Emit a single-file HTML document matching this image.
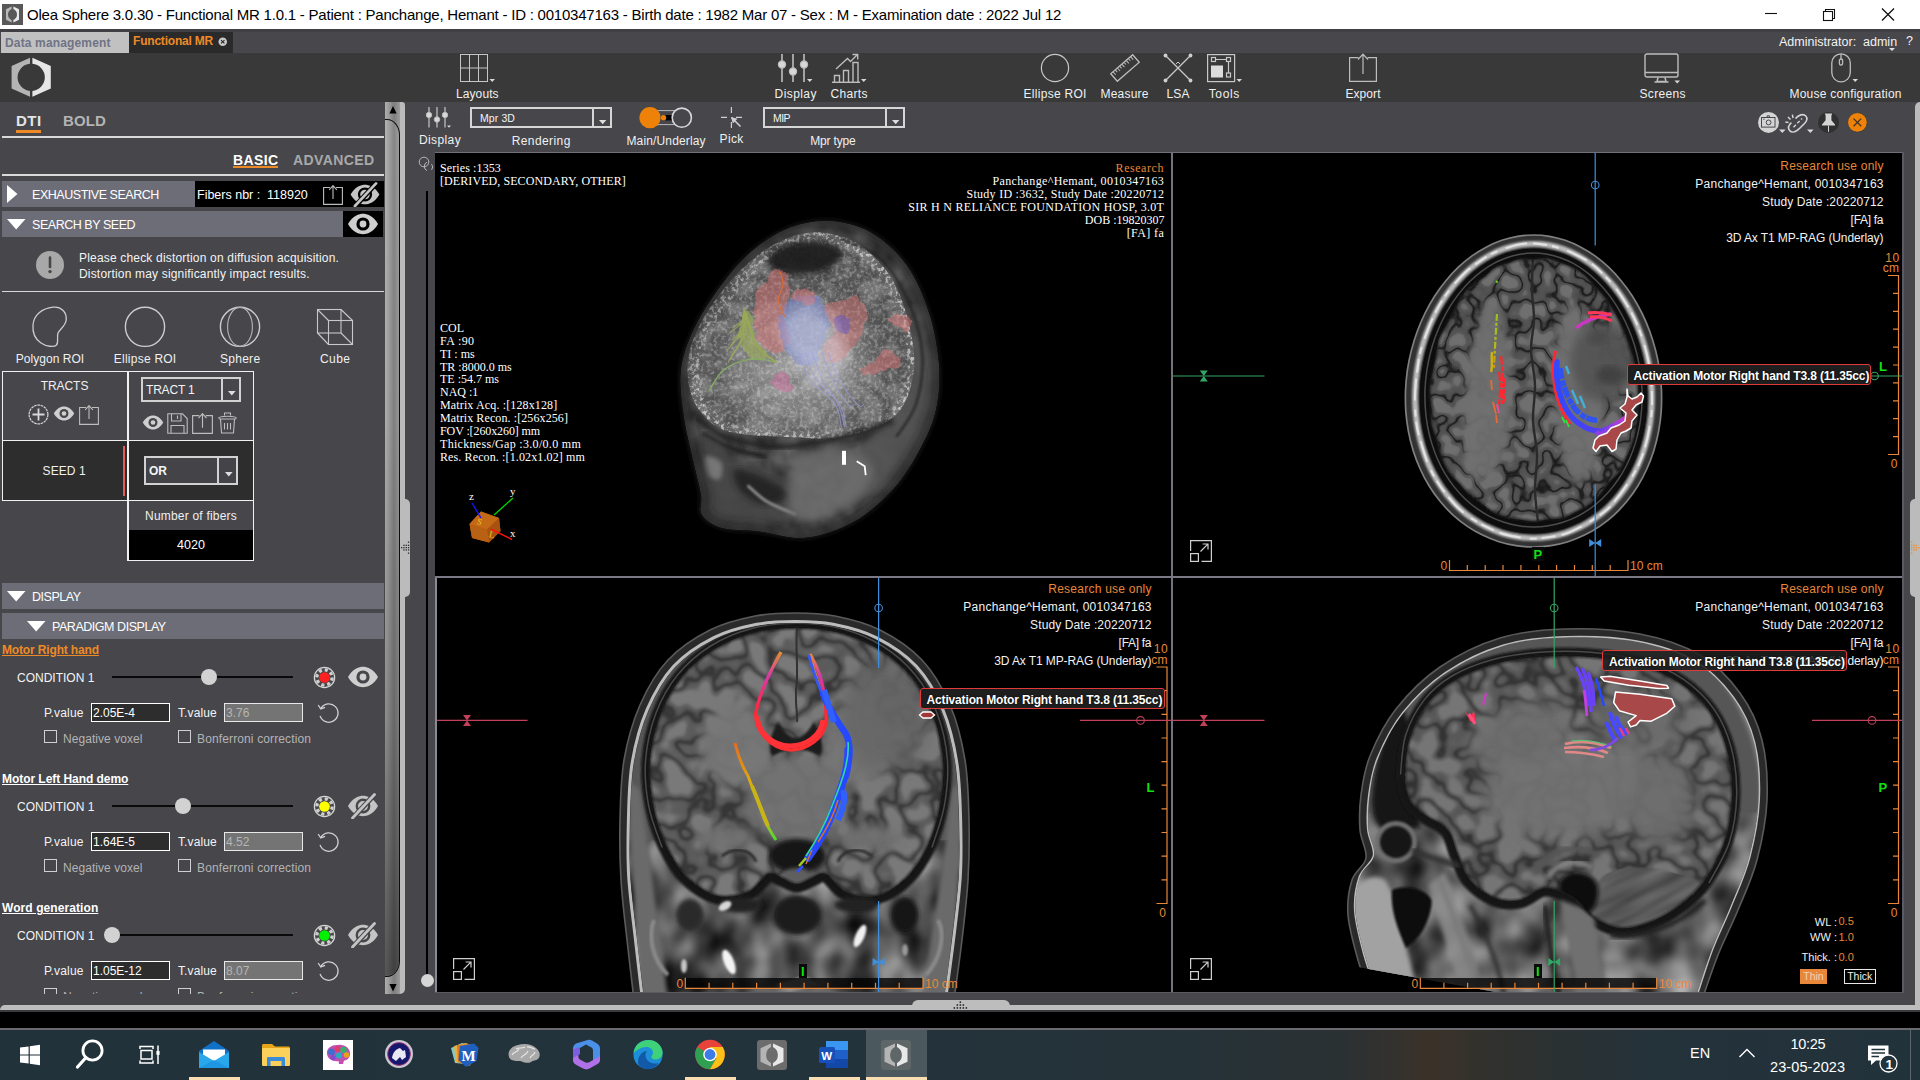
<!DOCTYPE html>
<html><head><meta charset="utf-8"><title>Olea Sphere</title>
<style>
*{box-sizing:border-box;margin:0;padding:0}
html,body{width:1920px;height:1080px;overflow:hidden;background:#46464b;-webkit-font-smoothing:antialiased;font-family:"Liberation Sans",sans-serif;color:#fff}
.a{position:absolute}
.t{position:absolute;white-space:nowrap;line-height:1}
svg{position:absolute;overflow:visible}
.lbl{position:absolute;white-space:nowrap;line-height:1;font-size:12px;color:#f0f0f0;transform:translateX(-50%)}
.bar{position:absolute;background:#6d6d77;left:2px;height:26px}
.bar span{position:absolute;top:7.5px;font-size:12.5px;line-height:1;color:#fff;white-space:nowrap;letter-spacing:-0.46px}
.inp{position:absolute;width:79px;height:19px;border:1px solid #fff;background:#2d2d2d;font-size:12px;line-height:18.5px;padding-left:1px;color:#fff}
.inp.g{background:#747474;border-color:#e8e8e8;color:#b4b4b4}
.cb{position:absolute;width:13px;height:13px;border:1px solid #d0d0d0}
.gl{position:absolute;font-size:12px;line-height:1;color:#b4b4b4;white-space:nowrap;letter-spacing:0.05px}
.wl{position:absolute;font-size:13px;line-height:1;color:#f4f4f4;white-space:nowrap}
.ser{font-family:"Liberation Serif",serif;font-size:12px;line-height:13px;color:#fff;position:absolute;white-space:nowrap}
.vt{position:absolute;font-size:12px;line-height:1;color:#f2f2f2;white-space:nowrap;text-align:right}
.or{color:#e8873a}
</style></head><body>
<!-- title bar -->
<div class="a" style="left:0;top:0;width:1920px;height:29px;background:#fff"></div>
<svg style="left:2px;top:4px" width="21" height="21" viewBox="0 0 21 21"><rect width="21" height="21" fill="#585858"/><path d="M9.6 2.6 L4 5.2 V15.8 L9.6 18.4 V16 A6 6 0 0 1 9.6 5 Z" fill="#b8b8b8"/><path d="M11.4 2.6 L17 5.2 V15.8 L11.4 18.4 V16 A6 6 0 0 0 11.4 5 Z" fill="#e8e8e8"/></svg>
<div class="t" id="ttl" style="left:27px;top:6.5px;font-size:15px;color:#000;letter-spacing:-0.22px">Olea Sphere 3.0.30 - Functional MR 1.0.1 - Patient : Panchange, Hemant - ID : 0010347163 - Birth date : 1982 Mar 07 - Sex : M - Examination date : 2022 Jul 12</div>
<svg style="left:1760px;top:4px" width="150" height="22" viewBox="0 0 150 22" fill="none" stroke="#111" stroke-width="1.1"><path d="M5 9.5H17"/><rect x="63.5" y="7.5" width="9" height="9"/><path d="M65.5 7.5V5.5H74.5V14.5H72.5"/><path d="M122 4.5L134 16.5M134 4.5L122 16.5" stroke-width="1.3"/></svg>
<!-- tab bar -->
<div class="a" style="left:0;top:29px;width:1920px;height:24px;background:#47474c"></div>
<div class="a" style="left:0;top:29px;width:1920px;height:3px;background:#3f3f44"></div>
<div class="a" style="left:1px;top:32px;width:128px;height:21px;background:#c1c1c1"></div>
<div class="t" style="left:5px;top:36.5px;font-size:12px;font-weight:bold;color:#6f7384;letter-spacing:0.15px">Data management</div>
<div class="a" style="left:129px;top:32px;width:104px;height:21px;background:#2a2a2a"></div>
<div class="t" style="left:133px;top:35px;font-size:12px;font-weight:bold;color:#ee8a26;letter-spacing:-0.2px">Functional MR</div>
<svg style="left:217.5px;top:36.8px" width="9.5" height="9.5" viewBox="0 0 10 10"><circle cx="5" cy="5" r="4.5" fill="#c8c8c8"/><path d="M3.2 3.2L6.8 6.8M6.8 3.2L3.2 6.8" stroke="#2a2a2a" stroke-width="1.2"/></svg>
<div class="t" style="left:1779px;top:35.5px;font-size:12.5px;color:#f2f2f2;letter-spacing:0px">Administrator:&nbsp; admin</div>
<svg style="left:1889px;top:48px" width="6" height="4"><path d="M0 0H6L3 3Z" fill="#ddd"/></svg>
<div class="t" style="left:1906px;top:35px;font-size:12.5px;color:#f2f2f2">?</div>
<!-- main toolbar -->
<div class="a" style="left:0;top:53px;width:1920px;height:49px;background:#393939"></div>
<svg style="left:11px;top:57px" width="41" height="41" viewBox="0 0 41 41"><path d="M19 0.8 L0.6 9 V31.5 L19 39.8 V33.9 A13.6 13.6 0 0 1 19 6.8 Z" fill="#b4b4b4"/><path d="M21.4 0.8 L39.8 9 V31.5 L21.4 39.8 V33.9 A13.6 13.6 0 0 0 21.4 6.8 Z" fill="#e6e6e6"/></svg>
<!-- layouts -->
<svg style="left:460px;top:54px" width="40" height="30" viewBox="0 0 40 30" fill="none" stroke="#c6c6c6" stroke-width="1"><rect x="0.5" y="0.5" width="27" height="27"/><path d="M9.5 0.5V27.5M18.5 0.5V27.5M0.5 14H27.5"/><path d="M29.5 25H35L32.2 28Z" fill="#d8d8d8" stroke="none"/></svg>
<div class="lbl" style="left:477.35px;top:88px;letter-spacing:0.1px">Layouts</div>
<!-- display -->
<svg style="left:776px;top:54px" width="40" height="30" viewBox="0 0 40 30" fill="none" stroke="#bdbdbd" stroke-width="1.6"><path d="M6 0V28M17 0V28M28 0V28"/><g fill="#d8d8d8" stroke="#bdbdbd" stroke-width="1.2"><circle cx="6" cy="10.5" r="3.6"/><circle cx="17" cy="17.5" r="3.6"/><circle cx="28" cy="10.5" r="3.6"/></g><path d="M31 25H36.5L33.7 28Z" fill="#d8d8d8" stroke="none"/></svg>
<div class="lbl" style="left:795.705px;top:88px;letter-spacing:0.41px">Display</div>
<!-- charts -->
<svg style="left:831px;top:53px" width="40" height="31" viewBox="0 0 40 31" fill="none" stroke="#bdbdbd" stroke-width="1.4"><path d="M1 29.3H29"/><path d="M3.5 29V22.5H8.5V29M12.5 29V17.5H17.5V29M22 29V9.5H27V29"/><path d="M5 16L16.5 5.5L19.5 8.5L26.5 1.5M21.5 1.5H26.7V6.5"/><path d="M30 26H35.5L32.7 29Z" fill="#d8d8d8" stroke="none"/></svg>
<div class="lbl" style="left:849.15px;top:88px;letter-spacing:0.3px">Charts</div>
<!-- ellipse roi -->
<svg style="left:1040px;top:53px" width="30" height="30" viewBox="0 0 30 30" fill="none" stroke="#c8c8c8" stroke-width="1.2"><circle cx="15" cy="15" r="13.6"/></svg>
<div class="lbl" style="left:1055.145px;top:88px;letter-spacing:0.29px">Ellipse ROI</div>
<!-- measure -->
<svg style="left:1110px;top:53px" width="30" height="30" viewBox="0 0 30 30" fill="none" stroke="#bdbdbd" stroke-width="1.3"><g transform="rotate(-41 15 15)"><rect x="0.5" y="10" width="29" height="10"/><path d="M3.5 10V14M6.4 10V13M9.300 10V14M12.200 10V13M15.100 10V14M18 10V13M20.900 10V14M23.800 10V13M26.700 10V14" stroke-width="1"/></g></svg>
<div class="lbl" style="left:1124.605px;top:88px;letter-spacing:0.21px">Measure</div>
<!-- LSA -->
<svg style="left:1163px;top:53px" width="30" height="30" viewBox="0 0 30 30" fill="none" stroke="#c8c8c8" stroke-width="1.3"><path d="M2.5 2.5L27.5 27.5M27.5 2.5L2.5 27.5"/><g fill="#d0d0d0" stroke="none"><circle cx="2.5" cy="2.5" r="1.9"/><circle cx="27.5" cy="2.5" r="1.9"/><circle cx="2.5" cy="27.5" r="1.9"/><circle cx="27.5" cy="27.5" r="1.9"/></g><path d="M13 11L15 9L17 11" stroke-width="1"/></svg>
<div class="lbl" style="left:1178.085px;top:88px;letter-spacing:0.17px">LSA</div>
<!-- tools -->
<svg style="left:1207px;top:54px" width="36" height="30" viewBox="0 0 36 30" fill="none" stroke="#c8c8c8" stroke-width="1.2"><rect x="0.6" y="0.6" width="27" height="27"/><rect x="4" y="11.5" width="12" height="12" fill="#dcdcdc" stroke="none"/><rect x="4.5" y="3.5" width="4" height="4"/><rect x="19.5" y="3.5" width="4" height="4"/><rect x="19.5" y="19" width="4" height="4"/><path d="M8.5 5.5H19.5M21.5 7.5V19"/><path d="M29.5 25H35L32.2 28Z" fill="#d8d8d8" stroke="none"/></svg>
<div class="lbl" style="left:1224.31px;top:88px;letter-spacing:0.62px">Tools</div>
<!-- export -->
<svg style="left:1348px;top:53px" width="30" height="30" viewBox="0 0 30 30" fill="none" stroke="#bdbdbd" stroke-width="1.2"><path d="M10.5 4.6H1.6V28.4H28.4V4.6H19.5"/><path d="M15 21V1.5M10 6.5L15 1.2L20 6.5"/></svg>
<div class="lbl" style="left:1363.04px;top:88px;letter-spacing:0.08px">Export</div>
<!-- screens -->
<svg style="left:1644px;top:53px" width="40" height="31" viewBox="0 0 40 31" fill="none" stroke="#bdbdbd" stroke-width="1.4"><rect x="1" y="1" width="33" height="23" rx="2"/><path d="M1 19.5H34"/><path d="M14 24.5L13 28.5H22L21 24.5M10.5 29H24.5" stroke-width="1.5"/><path d="M30.5 27.5H36L33.2 30.5Z" fill="#d8d8d8" stroke="none"/></svg>
<div class="lbl" style="left:1662.655px;top:88px;letter-spacing:0.31px">Screens</div>
<!-- mouse -->
<svg style="left:1831px;top:53px" width="30" height="31" viewBox="0 0 30 31" fill="none" stroke="#bdbdbd" stroke-width="1.3"><rect x="0.8" y="0.8" width="18.5" height="28" rx="9.2"/><path d="M10 1V6"/><rect x="8.4" y="6" width="3.2" height="6" rx="1.6"/><path d="M21.5 26H27L24.2 29Z" fill="#d8d8d8" stroke="none"/></svg>
<div class="lbl" style="left:1845.61px;top:88px;letter-spacing:0.22px">Mouse configuration</div>
<svg width="0" height="0" style="left:0;top:0"><defs>
<symbol id="eye" viewBox="0 0 32 22"><path d="M1 11 C6 2.5 12 0.8 16 0.8 C20 0.8 26 2.5 31 11 C26 19.5 20 21.2 16 21.2 C12 21.2 6 19.5 1 11Z" fill="#cfcfcf"/><circle cx="16" cy="11" r="6.6" fill="#000"/><circle cx="16" cy="11" r="3.4" fill="#cfcfcf"/></symbol>
<symbol id="eyeg" viewBox="0 0 32 22"><path d="M1 11 C6 2.5 12 0.8 16 0.8 C20 0.8 26 2.5 31 11 C26 19.5 20 21.2 16 21.2 C12 21.2 6 19.5 1 11Z" fill="#cfcfcf"/><circle cx="16" cy="11" r="6.6" fill="#46464b"/><circle cx="16" cy="11" r="3.4" fill="#cfcfcf"/></symbol>
<symbol id="eyes" viewBox="0 0 32 26"><path d="M1 13 C6 4.5 12 2.8 16 2.8 C20 2.8 26 4.5 31 13 C26 21.5 20 23.2 16 23.2 C12 23.2 6 21.5 1 13Z" fill="#c4c4c4"/><circle cx="16" cy="13" r="6.2" fill="none" stroke="#000" stroke-width="2.4" class="pp"/><path d="M5 26L28 1" stroke="#000" stroke-width="5.2" class="pp"/><path d="M5.5 25L27.5 1.5" stroke="#c4c4c4" stroke-width="2.8" stroke-linecap="round"/></symbol>
<symbol id="eyesg" viewBox="0 0 32 26"><path d="M1 13 C6 4.5 12 2.8 16 2.8 C20 2.8 26 4.5 31 13 C26 21.5 20 23.2 16 23.2 C12 23.2 6 21.5 1 13Z" fill="#c4c4c4"/><circle cx="16" cy="13" r="6.2" fill="none" stroke="#46464b" stroke-width="2.4"/><path d="M5 26L28 1" stroke="#46464b" stroke-width="5.2"/><path d="M5.5 25L27.5 1.5" stroke="#c4c4c4" stroke-width="2.8" stroke-linecap="round"/></symbol>
<symbol id="exp" viewBox="0 0 20 20"><path d="M7 2.5H0.6V19.4H19.4V2.5H13" fill="none" stroke="#bdbdbd" stroke-width="1.1"/><path d="M10 14V0.8M6.2 4.8L10 0.6L13.8 4.8" fill="none" stroke="#bdbdbd" stroke-width="1.1"/></symbol>
<symbol id="rst" viewBox="0 0 24 24"><path d="M4.2 7.5 A9.6 9.6 0 1 1 3.2 15.5" fill="none" stroke="#d0d0d0" stroke-width="1.4"/><path d="M1.2 4.2L3.9 8.3L8.4 6.6" fill="none" stroke="#d0d0d0" stroke-width="1.3"/></symbol>
<symbol id="cw" viewBox="0 0 24 24"><circle cx="12" cy="12" r="10.6" fill="none" stroke="#d4d4d4" stroke-width="1.3"/><circle cx="12" cy="12" r="8" fill="none" stroke="#cfcfcf" stroke-width="3.4" stroke-dasharray="3.3 2.98"/></symbol>
</defs></svg>
<!-- top tabs -->
<div class="t" style="left:16px;top:113px;font-size:15px;font-weight:bold;color:#e4e4e4;letter-spacing:0.5px">DTI</div>
<div class="a" style="left:16px;top:130px;width:25px;height:3px;background:#ee8a26"></div>
<div class="t" style="left:63px;top:113px;font-size:15px;font-weight:bold;color:#b4b4b4;letter-spacing:0.1px">BOLD</div>
<div class="a" style="left:2px;top:136px;width:382px;height:2px;background:#d9d9d9"></div>
<div class="t" style="left:233px;top:153px;font-size:14px;font-weight:bold;color:#fff;letter-spacing:0.4px">BASIC</div>
<div class="a" style="left:233px;top:166px;width:45px;height:2px;background:#ee8a26"></div>
<div class="t" style="left:293px;top:153px;font-size:14px;font-weight:bold;color:#a9a9a9;letter-spacing:0.4px">ADVANCED</div>
<div class="a" style="left:2px;top:174px;width:382px;height:2px;background:#d9d9d9"></div>
<!-- exhaustive search -->
<div class="bar" style="top:181px;width:193px"><span style="left:30px">EXHAUSTIVE SEARCH</span></div>
<svg style="left:7px;top:185px" width="11" height="18"><path d="M0 0L10.5 9L0 18Z" fill="#fff"/></svg>
<div class="a" style="left:195px;top:181px;width:189px;height:26px;background:#000"></div>
<div class="wl" style="left:197px;top:189px;font-size:12.5px;color:#fff">Fibers nbr :</div>
<div class="wl" style="left:267px;top:189px;font-size:12.5px;color:#fff">118920</div>
<svg style="left:323px;top:185px" width="20" height="20"><use href="#exp"/></svg>
<svg style="left:349px;top:181.5px" width="32" height="25"><use href="#eyes"/></svg>
<!-- search by seed -->
<div class="bar" style="top:211px;width:341px"><span style="left:30px">SEARCH BY SEED</span></div>
<svg style="left:7px;top:219px" width="19" height="11"><path d="M0 0H18.5L9.2 10.5Z" fill="#fff"/></svg>
<div class="a" style="left:343px;top:211px;width:40px;height:26px;background:#000"></div>
<svg style="left:347px;top:213px" width="32" height="22"><use href="#eye"/></svg>
<!-- warning -->
<svg style="left:36px;top:251px" width="28" height="28" viewBox="0 0 28 28"><circle cx="14" cy="14" r="14" fill="#a8a8a8"/><path d="M14 6.5V16" stroke="#46464b" stroke-width="2.6" stroke-linecap="round"/><circle cx="14" cy="20.6" r="1.7" fill="#46464b"/></svg>
<div class="wl" style="left:79px;top:252px;font-size:12px;letter-spacing:0.18px">Please check distortion on diffusion acquisition.</div>
<div class="wl" style="left:79px;top:268px;font-size:12px;letter-spacing:0.18px">Distortion may significantly impact results.</div>
<div class="a" style="left:2px;top:291px;width:382px;height:1px;background:#d9d9d9"></div>
<!-- ROI tools -->
<svg style="left:32px;top:306px" width="36" height="42" viewBox="0 0 36 42" fill="none" stroke="#cdcdcd" stroke-width="1.3"><path d="M21 1.2 C29 0.2 35 6 34.2 14 C33.6 20 27.5 23.5 26 27 C24.5 31 27 36 24.5 39 C22 41.5 14 40.5 9 37 C3 33 0.4 26 1 19 C1.8 9 10 2.4 21 1.2Z"/></svg>
<div class="lbl" style="left:50.02px;top:353.4px;letter-spacing:0.04px">Polygon ROI</div>
<svg style="left:124px;top:306px" width="42" height="42" viewBox="0 0 42 42" fill="none" stroke="#cdcdcd" stroke-width="1.4"><circle cx="21" cy="20.8" r="19.6"/></svg>
<div class="lbl" style="left:145.12px;top:353.4px;letter-spacing:0.24px">Ellipse ROI</div>
<svg style="left:219px;top:306px" width="42" height="42" viewBox="0 0 42 42" fill="none" stroke="#cdcdcd" stroke-width="1.4"><circle cx="21" cy="20.8" r="19.6"/><ellipse cx="21" cy="20.8" rx="12.4" ry="19.4" stroke-width="1.1" stroke="#b6b6b6"/></svg>
<div class="lbl" style="left:240.15px;top:353.4px;letter-spacing:0.3px">Sphere</div>
<svg style="left:316px;top:308px" width="38" height="38" viewBox="0 0 38 38" fill="none" stroke="#c8c8c8" stroke-width="1.1"><rect x="1.5" y="1.5" width="23.5" height="23.5"/><rect x="12.5" y="12.5" width="24" height="24"/><path d="M1.5 1.5L12.5 12.5M25 1.5L36.5 12.5M1.5 25L12.5 36.5M25 25L36.5 36.5"/></svg>
<div class="lbl" style="left:335.215px;top:353.4px;letter-spacing:0.43px">Cube</div>
<!-- tracts table -->
<div class="a" style="left:2px;top:371px;width:252px;height:70px;border:1px solid #f0f0f0"></div>
<div class="a" style="left:127px;top:371px;width:2px;height:190px;background:#f0f0f0"></div>
<div class="a" style="left:2px;top:441px;width:252px;height:60px;background:#2d2d2d;border:1px solid #f0f0f0;border-top:none"></div>
<div class="a" style="left:127px;top:441px;width:2px;height:60px;background:#f0f0f0"></div>
<div class="a" style="left:128px;top:501px;width:126px;height:60px;border:1px solid #f0f0f0;border-top:none;background:#000"></div>
<div class="a" style="left:129px;top:501px;width:124px;height:29px;background:#46464b"></div>
<div class="lbl" style="left:64.5px;top:379.5px;font-size:12px;letter-spacing:-0.05px">TRACTS</div>
<svg style="left:28px;top:404px" width="21" height="21" viewBox="0 0 21 21" fill="none" stroke="#d8d8d8" stroke-width="1.2"><circle cx="10.5" cy="10.5" r="9.4" stroke-dasharray="2.6 0.7"/><path d="M4.5 10.5H16.5M10.5 4.5V16.5" stroke-width="1.8"/></svg>
<svg style="left:53px;top:406px" width="22" height="15"><use href="#eyeg"/></svg>
<svg style="left:79px;top:405px" width="20" height="20"><use href="#exp"/></svg>
<!-- tract combo -->
<div class="a" style="left:141px;top:377px;width:100px;height:25px;border:2px solid #d2d2d2"></div>
<div class="a" style="left:221px;top:378px;width:2px;height:23px;background:#d2d2d2"></div>
<div class="wl" style="left:146px;top:384px;font-size:12px;letter-spacing:-0.19px">TRACT 1</div>
<svg style="left:228px;top:391px" width="8" height="5"><path d="M0 0H7.6L3.8 4.4Z" fill="#ddd"/></svg>
<svg style="left:142px;top:415px" width="22" height="15"><use href="#eyeg"/></svg>
<svg style="left:167px;top:413px" width="21" height="21" viewBox="0 0 21 21" fill="none" stroke="#bdbdbd" stroke-width="1.1"><path d="M0.8 0.8H15.5L20.2 5.5V20.2H0.8Z"/><path d="M4.5 0.8V8H14V0.8M10.5 2.5V6M4 20V12.5H17V20"/></svg>
<svg style="left:192px;top:413px" width="21" height="21" viewBox="0 0 20 20"><use href="#exp"/></svg>
<svg style="left:217px;top:412px" width="21" height="22" viewBox="0 0 21 22" fill="none" stroke="#bdbdbd" stroke-width="1.1"><path d="M7.5 3.5V1H13.5V3.5M1.5 6.5C1.5 3.5 19.5 3.5 19.5 6.5M2 7H19M3.5 7L4.5 21H16.5L17.5 7M7.5 11V17.5M10.5 11V17.5M13.5 11V17.5"/></svg>
<div class="lbl" style="left:64.2px;top:464.5px;font-size:12px;letter-spacing:0.1px">SEED 1</div>
<div class="a" style="left:123px;top:446px;width:2px;height:50px;background:#e05c5c"></div>
<div class="a" style="left:144px;top:456px;width:94px;height:29px;border:2px solid #d2d2d2;background:#444448"></div>
<div class="a" style="left:217px;top:457px;width:2px;height:27px;background:#d2d2d2"></div>
<div class="wl" style="left:149px;top:465px;font-size:12px;font-weight:bold;letter-spacing:-0.1px">OR</div>
<svg style="left:225px;top:472px" width="8" height="5"><path d="M0 0H7.6L3.8 4.4Z" fill="#ddd"/></svg>
<div class="lbl" style="left:191px;top:510px;font-size:12px;letter-spacing:0.2px">Number of fibers</div>
<div class="lbl" style="left:191px;top:539px;font-size:12.5px;color:#fff">4020</div>
<!-- display bars -->
<div class="bar" style="top:583px;width:382px"><span style="left:30px">DISPLAY</span></div>
<svg style="left:7px;top:591px" width="19" height="11"><path d="M0 0H18.5L9.2 10.5Z" fill="#fff"/></svg>
<div class="bar" style="top:613px;width:382px"><span style="left:50px">PARADIGM DISPLAY</span></div>
<svg style="left:27px;top:621px" width="19" height="11"><path d="M0 0H18.5L9.2 10.5Z" fill="#fff"/></svg>
<div class="a" style="left:0;top:640px;width:385px;height:354px;overflow:hidden"><div class="a" style="left:0;top:-640px">
<div class="t" style="left:2px;top:644px;font-size:12px;font-weight:bold;color:#ee8a26;text-decoration:underline;letter-spacing:-0.15px">Motor Right hand</div>
<div class="wl" style="left:17px;top:671.5px;font-size:12px;letter-spacing:0px">CONDITION 1</div>
<div class="a" style="left:112px;top:676px;width:181px;height:2px;background:#0a0a0a"></div>
<div class="a" style="left:201px;top:669px;width:16px;height:16px;border-radius:8px;background:#d2d2d2"></div>
<svg style="left:313px;top:665.5px" width="23" height="23" viewBox="0 0 24 24"><use href="#cw"/><circle cx="12" cy="12" r="5.6" fill="#ff2020"/></svg>
<svg style="left:347px;top:666px" width="32" height="22"><use href="#eyeg"/></svg>
<div class="wl" style="left:44px;top:706.5px;font-size:12px;letter-spacing:0.15px">P.value</div>
<div class="inp" style="left:91px;top:703px">2.05E-4</div>
<div class="wl" style="left:178px;top:706.5px;font-size:12px;letter-spacing:0.1px">T.value</div>
<div class="inp g" style="left:224px;top:703px">3.76</div>
<svg style="left:317px;top:701px" width="23" height="23" viewBox="0 0 24 24"><use href="#rst"/></svg>
<div class="cb" style="left:44px;top:730px"></div>
<div class="gl" style="left:63px;top:733px">Negative voxel</div>
<div class="cb" style="left:178px;top:730px"></div>
<div class="gl" style="left:197px;top:733px;letter-spacing:0.13px">Bonferroni correction</div>
<div class="t" style="left:2px;top:773px;font-size:12px;font-weight:bold;color:#ffffff;text-decoration:underline;letter-spacing:-0.05px">Motor Left Hand demo</div>
<div class="wl" style="left:17px;top:800.5px;font-size:12px;letter-spacing:0px">CONDITION 1</div>
<div class="a" style="left:112px;top:805px;width:181px;height:2px;background:#0a0a0a"></div>
<div class="a" style="left:175px;top:798px;width:16px;height:16px;border-radius:8px;background:#d2d2d2"></div>
<svg style="left:313px;top:794.5px" width="23" height="23" viewBox="0 0 24 24"><use href="#cw"/><circle cx="12" cy="12" r="5.6" fill="#ffff00"/></svg>
<svg style="left:347px;top:793px" width="32" height="26"><use href="#eyesg"/></svg>
<div class="wl" style="left:44px;top:835.5px;font-size:12px;letter-spacing:0.15px">P.value</div>
<div class="inp" style="left:91px;top:832px">1.64E-5</div>
<div class="wl" style="left:178px;top:835.5px;font-size:12px;letter-spacing:0.1px">T.value</div>
<div class="inp g" style="left:224px;top:832px">4.52</div>
<svg style="left:317px;top:830px" width="23" height="23" viewBox="0 0 24 24"><use href="#rst"/></svg>
<div class="cb" style="left:44px;top:859px"></div>
<div class="gl" style="left:63px;top:862px">Negative voxel</div>
<div class="cb" style="left:178px;top:859px"></div>
<div class="gl" style="left:197px;top:862px;letter-spacing:0.13px">Bonferroni correction</div>
<div class="t" style="left:2px;top:902px;font-size:12px;font-weight:bold;color:#ffffff;text-decoration:underline;letter-spacing:0.08px">Word generation</div>
<div class="wl" style="left:17px;top:929.5px;font-size:12px;letter-spacing:0px">CONDITION 1</div>
<div class="a" style="left:112px;top:934px;width:181px;height:2px;background:#0a0a0a"></div>
<div class="a" style="left:104px;top:927px;width:16px;height:16px;border-radius:8px;background:#d2d2d2"></div>
<svg style="left:313px;top:923.5px" width="23" height="23" viewBox="0 0 24 24"><use href="#cw"/><circle cx="12" cy="12" r="5.6" fill="#00f000"/></svg>
<svg style="left:347px;top:922px" width="32" height="26"><use href="#eyesg"/></svg>
<div class="wl" style="left:44px;top:964.5px;font-size:12px;letter-spacing:0.15px">P.value</div>
<div class="inp" style="left:91px;top:961px">1.05E-12</div>
<div class="wl" style="left:178px;top:964.5px;font-size:12px;letter-spacing:0.1px">T.value</div>
<div class="inp g" style="left:224px;top:961px">8.07</div>
<svg style="left:317px;top:959px" width="23" height="23" viewBox="0 0 24 24"><use href="#rst"/></svg>
<div class="cb" style="left:44px;top:988px"></div>
<div class="gl" style="left:63px;top:991px">Negative voxel</div>
<div class="cb" style="left:178px;top:988px"></div>
<div class="gl" style="left:197px;top:991px;letter-spacing:0.13px">Bonferroni correction</div>
</div></div>
<!-- left scrollbar -->
<div class="a" style="left:400px;top:102px;width:5px;height:892px;background:#bbbbbb;border-radius:0 5px 8px 0"></div>
<div class="a" style="left:400px;top:499px;width:10px;height:98px;background:#bbbbbb;border-radius:0 5px 5px 0"></div>
<div class="a" style="left:385px;top:102px;width:15px;height:892px;background:linear-gradient(90deg,#adadad 0,#a0a0a0 3px,#7e7e7e 9px,#9c9c9c 15px)"></div>
<svg style="left:389px;top:106px" width="8" height="8"><path d="M4 0L7.6 7.4H0.4Z" fill="#000"/></svg>
<div class="a" style="left:385px;top:119px;width:15px;height:858px;border-radius:0 13px 13px 0/0 16px 16px 0;border:1.5px solid #0c0c0c;border-left:none;background:linear-gradient(90deg,#adadad 0,#a0a0a0 3px,#7e7e7e 9px,#9c9c9c 15px)"></div>
<div class="a" style="left:385px;top:120px;width:14px;height:856px;border-radius:0 13px 13px 0/0 15px 15px 0;background:linear-gradient(180deg,rgba(255,255,255,0.06) 0,rgba(0,0,0,0) 35%,rgba(0,0,0,0.18) 70%,rgba(0,0,0,0.5) 100%)"></div>

<svg style="left:389px;top:984px" width="8" height="8"><path d="M0.4 0H7.6L4 7.4Z" fill="#000"/></svg>
<!-- grip -->
<svg style="left:401px;top:541px" width="8" height="14" fill="#2a2a2a"><rect x="0" y="6" width="1.3" height="1.3"/><rect x="2.3" y="3.7" width="1.3" height="1.3"/><rect x="2.3" y="6" width="1.3" height="1.3"/><rect x="2.3" y="8.3" width="1.3" height="1.3"/><rect x="4.6" y="3.7" width="1.3" height="1.3"/><rect x="4.6" y="6" width="1.3" height="1.3"/><rect x="4.6" y="8.3" width="1.3" height="1.3"/><rect x="6.9" y="0.5" width="1.3" height="1.3"/><rect x="6.9" y="3.7" width="1.3" height="1.3"/><rect x="6.9" y="6" width="1.3" height="1.3"/><rect x="6.9" y="8.3" width="1.3" height="1.3"/><rect x="6.9" y="11.5" width="1.3" height="1.3"/></svg>
<!-- secondary toolbar -->
<svg style="left:425px;top:106px" width="30" height="24" viewBox="0 0 30 24" fill="none" stroke="#bdbdbd" stroke-width="1.3"><path d="M4 1V21.5M12 1V21.5M20 1V21.5"/><g fill="#d8d8d8" stroke="#bdbdbd" stroke-width="1"><circle cx="4" cy="9" r="2.7"/><circle cx="12" cy="13.5" r="2.7"/><circle cx="20" cy="9" r="2.7"/></g><path d="M22 19.5H26L24 21.8Z" fill="#d8d8d8" stroke="none"/></svg>
<div class="lbl" style="left:440.0px;top:133.8px;letter-spacing:0.4px">Display</div>
<div class="a" style="left:470px;top:107px;width:142px;height:21px;border:2px solid #d6d6d6"></div>
<div class="a" style="left:592px;top:108px;width:2px;height:19px;background:#d6d6d6"></div>
<div class="wl" style="left:480px;top:113px;font-size:10.5px;letter-spacing:0.1px">Mpr 3D</div>
<svg style="left:599px;top:120px" width="8" height="5"><path d="M0 0H7.4L3.7 4.2Z" fill="#ddd"/></svg>
<div class="lbl" style="left:541.21px;top:134.6px;letter-spacing:0.42px">Rendering</div>
<!-- toggle -->
<svg style="left:638px;top:106px" width="56" height="24" viewBox="0 0 56 24"><rect x="12" y="4.6" width="32" height="14" fill="#46464b" stroke="#b8b8b8" stroke-width="1"/><rect x="27" y="9" width="7" height="5.4" fill="#000"/><circle cx="12" cy="11.7" r="10.6" fill="#ee8208"/><circle cx="25.6" cy="11.7" r="2.6" fill="#ee8208"/><circle cx="43.8" cy="11.7" r="9.6" fill="#46464b" stroke="#d8d8d8" stroke-width="1.6"/></svg>
<div class="lbl" style="left:666.07px;top:134.8px;letter-spacing:0.14px">Main/Underlay</div>
<!-- pick -->
<svg style="left:720px;top:106px" width="24" height="24" viewBox="0 0 24 24" fill="none" stroke="#cfcfcf" stroke-width="1.2"><path d="M11.4 1V7M11.4 16V22M1 11.4H7M16 11.4H22"/><path d="M11.5 11.5L20.5 20.5" stroke-width="1.6"/><path d="M11 11L17.5 12.8L12.8 17.5Z" fill="#cfcfcf" stroke="none"/></svg>
<div class="lbl" style="left:731.685px;top:133.3px;letter-spacing:0.37px">Pick</div>
<div class="a" style="left:763px;top:107px;width:142px;height:21px;border:2px solid #d6d6d6"></div>
<div class="a" style="left:885px;top:108px;width:2px;height:19px;background:#d6d6d6"></div>
<div class="wl" style="left:773px;top:113px;font-size:10.5px;letter-spacing:-0.6px">MIP</div>
<svg style="left:892px;top:120px" width="8" height="5"><path d="M0 0H7.4L3.7 4.2Z" fill="#ddd"/></svg>
<div class="lbl" style="left:832.905px;top:134.6px;letter-spacing:-0.19px">Mpr type</div>
<!-- right icons -->
<svg style="left:1757px;top:111px" width="112" height="24" viewBox="0 0 112 24">
<circle cx="11.5" cy="11.4" r="10.5" fill="#d4d4d4"/><rect x="4.5" y="6.5" width="13.5" height="9.6" fill="none" stroke="#46464b" stroke-width="1"/><circle cx="11.6" cy="11.4" r="2.4" fill="none" stroke="#46464b" stroke-width="1"/><path d="M10.2 6.3V4.8H12.4V6.3M6.2 8.2H7.6" stroke="#46464b" stroke-width="1" fill="none"/>
<path d="M22 18.5H28.6L25.3 22Z" fill="#d8d8d8"/>
<g fill="none" stroke="#d4d4d4" stroke-width="1.5"><path d="M33.5 8.5L31 6M36 7L35.4 3.6M31.5 11.5L28.4 11" /><path d="M38.5 7.5 C41.5 3.5 46.5 2.6 48.8 5 C51 7.2 49.6 10.6 47.5 12.5 C45 15 42.5 17.5 40.5 19.2 C37.8 21.4 34.4 21.6 32.6 19.4 C30.6 17 32 13.8 34.4 11.6" stroke-width="1.6"/><path d="M36.5 16.2L45 7.6" stroke-dasharray="3.4 2" stroke-width="1.4"/></g>
<path d="M50 18.5H56.6L53.3 22Z" fill="#d8d8d8"/>
<circle cx="71.5" cy="11.4" r="10.5" fill="#303030"/><path d="M67.8 2.5H75.2L74.4 4.6V9.2L78 13.4V14.6H65V13.4L68.6 9.2V4.6Z" fill="#d4d4d4"/><path d="M71.5 14.6V20.8" stroke="#d4d4d4" stroke-width="1"/>
<circle cx="100.4" cy="11.4" r="9.8" fill="#ee8208" stroke="#333a44" stroke-width="0.8"/><path d="M96.6 7.6L104.2 15.2M104.2 7.6L96.6 15.2" stroke="#40342a" stroke-width="1.3"/>
</svg>
<!-- viewport backgrounds -->
<div class="a" style="left:435px;top:152px;width:1469px;height:841px;background:#000"></div>
<!-- slider left of viewports -->
<div class="a" style="left:426px;top:191px;width:2px;height:785px;background:#000"></div>
<div class="a" style="left:421px;top:974px;width:13px;height:13px;border-radius:7px;background:#d6d6d6"></div>
<svg style="left:418px;top:156px" width="18" height="16" viewBox="0 0 18 16" fill="none" stroke="#b8b8b8" stroke-width="1"><circle cx="6" cy="6" r="4.8"/><path d="M9 6.2 A4.6 4.6 0 0 0 9 14.6M13.6 8.2 A4.6 4.6 0 0 1 13.6 13.8"/></svg>
<svg style="left:0;top:0" width="1920" height="1080" viewBox="0 0 1920 1080">
<defs>
<filter id="b05"><feGaussianBlur stdDeviation="0.5"/></filter>
<filter id="b1"><feGaussianBlur stdDeviation="1"/></filter>
<filter id="b2"><feGaussianBlur stdDeviation="2"/></filter>
<filter id="b3"><feGaussianBlur stdDeviation="3"/></filter>
<filter id="b5"><feGaussianBlur stdDeviation="5"/></filter>
<filter id="b8"><feGaussianBlur stdDeviation="8"/></filter>
<filter id="b14"><feGaussianBlur stdDeviation="14"/></filter>
<filter id="spk" x="0" y="0" width="100%" height="100%" color-interpolation-filters="sRGB"><feTurbulence type="fractalNoise" baseFrequency="0.28" numOctaves="3" seed="4"/><feColorMatrix type="matrix" values="0 0 0 0 1 0 0 0 0 1 0 0 0 0 1 4.2 0 0 0 -1.95"/><feGaussianBlur stdDeviation="0.7"/></filter><filter id="stk" x="0" y="0" width="100%" height="100%" color-interpolation-filters="sRGB"><feTurbulence type="turbulence" baseFrequency="0.035 0.05" numOctaves="3" seed="12"/><feColorMatrix type="matrix" values="0 0 0 0 1 0 0 0 0 1 0 0 0 0 1 2.6 0 0 0 -0.35"/><feGaussianBlur stdDeviation="0.6"/></filter><filter id="dsp" x="-10%" y="-10%" width="120%" height="120%"><feTurbulence type="fractalNoise" baseFrequency="0.09" numOctaves="2" seed="8" result="n"/><feDisplacementMap in="SourceGraphic" in2="n" scale="9" xChannelSelector="R" yChannelSelector="G"/><feGaussianBlur stdDeviation="0.5"/></filter><filter id="tx3" x="0" y="0" width="100%" height="100%" color-interpolation-filters="sRGB"><feTurbulence type="fractalNoise" baseFrequency="0.045 0.045" numOctaves="3" seed="17"/><feColorMatrix type="matrix" values="0.800 0 0 0 -0.100 0.800 0 0 0 -0.100 0.800 0 0 0 -0.100 0 0 0 0 1"/><feGaussianBlur stdDeviation="0.8"/></filter><clipPath id="vpTL"><rect x="435" y="153" width="736" height="423"/></clipPath><clipPath id="hd3"><path d="M828.4 221.3C842.5 221.9 857.6 225.4 870.6 232.7C883.5 240.0 896.5 251.6 906.2 265.1C915.9 278.6 923.5 296.9 928.9 313.7C934.3 330.4 937.5 349.3 938.6 365.5C939.7 381.7 938.6 396.8 935.3 410.8C932.1 424.9 926.2 436.8 919.2 449.7C912.1 462.7 904.0 476.7 893.2 488.6C882.4 500.5 868.9 512.9 854.4 521.0C839.8 529.1 822.0 535.6 805.8 537.2C789.6 538.8 771.2 532.3 757.2 530.7C743.1 529.1 730.7 530.2 721.5 527.5C712.4 524.8 705.5 519.9 702.1 514.5C698.8 509.1 702.8 503.7 701.5 495.1C700.1 486.4 696.9 475.6 694.0 462.7C691.2 449.7 686.5 432.4 684.3 417.3C682.1 402.2 679.7 386.0 681.1 372.0C682.4 357.9 686.7 346.1 692.4 333.1C698.1 320.1 705.9 307.2 715.1 294.2C724.2 281.3 735.6 266.1 747.5 255.4C759.3 244.6 772.8 235.1 786.3 229.4C799.8 223.8 814.4 220.8 828.4 221.3Z"/></clipPath><clipPath id="cr3"><path d="M822.0 232.7C833.8 234.0 849.0 237.5 860.8 245.6C872.7 253.7 884.9 266.7 893.2 281.3C901.6 295.8 907.8 316.9 911.1 333.1C914.3 349.3 915.6 364.4 912.7 378.4C909.7 392.5 905.1 407.6 893.2 417.3C881.4 427.0 859.8 433.5 841.4 436.8C823.0 440.0 802.5 437.8 783.1 436.8C763.7 435.7 739.4 435.7 724.8 430.3C710.2 424.9 701.8 415.2 695.6 404.4C689.4 393.6 687.0 378.4 687.5 365.5C688.1 352.5 692.7 339.6 698.9 326.6C705.1 313.7 715.1 299.6 724.8 287.7C734.5 275.9 746.4 263.7 757.2 255.4C768.0 247.0 778.8 241.3 789.6 237.5C800.4 233.8 810.1 231.3 822.0 232.7Z"/></clipPath><mask id="rimM"><rect x="600" y="200" width="400" height="400" fill="#000"/><path d="M822.0 232.7C833.8 234.0 849.0 237.5 860.8 245.6C872.7 253.7 884.9 266.7 893.2 281.3C901.6 295.8 907.8 316.9 911.1 333.1C914.3 349.3 915.6 364.4 912.7 378.4C909.7 392.5 905.1 407.6 893.2 417.3C881.4 427.0 859.8 433.5 841.4 436.8C823.0 440.0 802.5 437.8 783.1 436.8C763.7 435.7 739.4 435.7 724.8 430.3C710.2 424.9 701.8 415.2 695.6 404.4C689.4 393.6 687.0 378.4 687.5 365.5C688.1 352.5 692.7 339.6 698.9 326.6C705.1 313.7 715.1 299.6 724.8 287.7C734.5 275.9 746.4 263.7 757.2 255.4C768.0 247.0 778.8 241.3 789.6 237.5C800.4 233.8 810.1 231.3 822.0 232.7Z" fill="#fff"/><path d="M822.9 243.3C833.8 244.5 847.8 247.8 858.8 255.3C869.8 262.8 881.0 274.7 888.8 288.2C896.5 301.7 902.3 321.2 905.3 336.2C908.3 351.2 909.5 365.1 906.8 378.1C904.0 391.1 899.8 405.1 888.8 414.1C877.8 423.1 857.8 429.1 840.8 432.1C823.9 435.1 804.9 433.1 786.9 432.1C768.9 431.1 746.5 431.1 733.0 426.1C719.5 421.1 711.7 412.1 706.0 402.1C700.3 392.1 698.0 378.1 698.5 366.1C699.0 354.2 703.3 342.2 709.0 330.2C714.7 318.2 724.0 305.2 733.0 294.2C742.0 283.2 752.9 272.0 762.9 264.3C772.9 256.5 782.9 251.3 792.9 247.8C802.9 244.3 811.9 242.0 822.9 243.3Z" fill="#000" filter="url(#b2)"/></mask>
</defs>
<g clip-path="url(#vpTL)">
<path d="M828.4 221.3C842.5 221.9 857.6 225.4 870.6 232.7C883.5 240.0 896.5 251.6 906.2 265.1C915.9 278.6 923.5 296.9 928.9 313.7C934.3 330.4 937.5 349.3 938.6 365.5C939.7 381.7 938.6 396.8 935.3 410.8C932.1 424.9 926.2 436.8 919.2 449.7C912.1 462.7 904.0 476.7 893.2 488.6C882.4 500.5 868.9 512.9 854.4 521.0C839.8 529.1 822.0 535.6 805.8 537.2C789.6 538.8 771.2 532.3 757.2 530.7C743.1 529.1 730.7 530.2 721.5 527.5C712.4 524.8 705.5 519.9 702.1 514.5C698.8 509.1 702.8 503.7 701.5 495.1C700.1 486.4 696.9 475.6 694.0 462.7C691.2 449.7 686.5 432.4 684.3 417.3C682.1 402.2 679.7 386.0 681.1 372.0C682.4 357.9 686.7 346.1 692.4 333.1C698.1 320.1 705.9 307.2 715.1 294.2C724.2 281.3 735.6 266.1 747.5 255.4C759.3 244.6 772.8 235.1 786.3 229.4C799.8 223.8 814.4 220.8 828.4 221.3Z" fill="#262626" filter="url(#b3)"/>
<path d="M828.4 221.3C842.5 221.9 857.6 225.4 870.6 232.7C883.5 240.0 896.5 251.6 906.2 265.1C915.9 278.6 923.5 296.9 928.9 313.7C934.3 330.4 937.5 349.3 938.6 365.5C939.7 381.7 938.6 396.8 935.3 410.8C932.1 424.9 926.2 436.8 919.2 449.7C912.1 462.7 904.0 476.7 893.2 488.6C882.4 500.5 868.9 512.9 854.4 521.0C839.8 529.1 822.0 535.6 805.8 537.2C789.6 538.8 771.2 532.3 757.2 530.7C743.1 529.1 730.7 530.2 721.5 527.5C712.4 524.8 705.5 519.9 702.1 514.5C698.8 509.1 702.8 503.7 701.5 495.1C700.1 486.4 696.9 475.6 694.0 462.7C691.2 449.7 686.5 432.4 684.3 417.3C682.1 402.2 679.7 386.0 681.1 372.0C682.4 357.9 686.7 346.1 692.4 333.1C698.1 320.1 705.9 307.2 715.1 294.2C724.2 281.3 735.6 266.1 747.5 255.4C759.3 244.6 772.8 235.1 786.3 229.4C799.8 223.8 814.4 220.8 828.4 221.3Z" fill="#424242" filter="url(#b1)" transform="translate(812 380) scale(0.975) translate(-812 -380)"/>
<g clip-path="url(#hd3)">
<rect x="670" y="215" width="280" height="335" filter="url(#tx3)" opacity="0.5"/>
<path d="M828.4 221.3C842.5 221.9 857.6 225.4 870.6 232.7C883.5 240.0 896.5 251.6 906.2 265.1C915.9 278.6 923.5 296.9 928.9 313.7C934.3 330.4 937.5 349.3 938.6 365.5C939.7 381.7 938.6 396.8 935.3 410.8C932.1 424.9 926.2 436.8 919.2 449.7C912.1 462.7 904.0 476.7 893.2 488.6C882.4 500.5 868.9 512.9 854.4 521.0C839.8 529.1 822.0 535.6 805.8 537.2C789.6 538.8 771.2 532.3 757.2 530.7C743.1 529.1 730.7 530.2 721.5 527.5C712.4 524.8 705.5 519.9 702.1 514.5C698.8 509.1 702.8 503.7 701.5 495.1C700.1 486.4 696.9 475.6 694.0 462.7C691.2 449.7 686.5 432.4 684.3 417.3C682.1 402.2 679.7 386.0 681.1 372.0C682.4 357.9 686.7 346.1 692.4 333.1C698.1 320.1 705.9 307.2 715.1 294.2C724.2 281.3 735.6 266.1 747.5 255.4C759.3 244.6 772.8 235.1 786.3 229.4C799.8 223.8 814.4 220.8 828.4 221.3Z" fill="none" stroke="#6c6c6c" stroke-width="6" filter="url(#b3)" opacity="0.8"/>
<path d="M915.9 307.2C920.2 305.0 932.6 347.1 935.3 365.5C938.0 383.8 935.9 402.2 932.1 417.3C928.3 432.4 920.8 444.3 912.7 456.2C904.6 468.1 895.4 481.0 883.5 488.6C871.6 496.1 846.3 506.9 841.4 501.5C836.5 496.1 846.8 469.7 854.4 456.2C861.9 442.7 877.6 433.5 886.8 420.6C895.9 407.6 904.6 397.3 909.4 378.4C914.3 359.6 911.6 309.3 915.9 307.2Z" fill="#555" filter="url(#b5)" opacity="0.9"/>
<path d="M822.0 232.7C833.8 234.0 849.0 237.5 860.8 245.6C872.7 253.7 884.9 266.7 893.2 281.3C901.6 295.8 907.8 316.9 911.1 333.1C914.3 349.3 915.6 364.4 912.7 378.4C909.7 392.5 905.1 407.6 893.2 417.3C881.4 427.0 859.8 433.5 841.4 436.8C823.0 440.0 802.5 437.8 783.1 436.8C763.7 435.7 739.4 435.7 724.8 430.3C710.2 424.9 701.8 415.2 695.6 404.4C689.4 393.6 687.0 378.4 687.5 365.5C688.1 352.5 692.7 339.6 698.9 326.6C705.1 313.7 715.1 299.6 724.8 287.7C734.5 275.9 746.4 263.7 757.2 255.4C768.0 247.0 778.8 241.3 789.6 237.5C800.4 233.8 810.1 231.3 822.0 232.7Z" fill="#525252" filter="url(#b3)" opacity="0.9"/>
<g clip-path="url(#cr3)">
<ellipse cx="799" cy="365" rx="72" ry="62" fill="#909090" filter="url(#b14)" opacity="0.75"/>
<rect x="680" y="225" width="250" height="230" filter="url(#stk)" opacity="0.2"/>
<rect x="680" y="225" width="250" height="230" filter="url(#spk)" opacity="0.24"/>
</g>
<g mask="url(#rimM)"><rect x="680" y="225" width="250" height="230" fill="#8a8a8a" opacity="0.3"/><rect x="680" y="225" width="250" height="230" filter="url(#spk)" opacity="0.5"/></g>
<path d="M773.4 250.5C778.8 245.9 792.3 241.9 802.5 240.8C812.8 239.7 828.4 241.0 834.9 244.0C841.4 247.0 843.6 254.0 841.4 258.6C839.2 263.2 829.5 268.8 822.0 271.5C814.4 274.2 804.7 275.3 796.1 274.8C787.4 274.2 773.9 272.4 770.1 268.3C766.4 264.3 768.0 255.1 773.4 250.5Z" fill="#1a1a1a" filter="url(#b3)" opacity="0.92"/>
<path d="M841.4 239.2C847.9 242.4 868.9 247.8 880.3 258.6C891.6 269.4 902.4 287.7 909.4 303.9C916.5 320.1 921.3 339.0 922.4 355.8C923.5 372.5 920.2 390.9 915.9 404.4C911.6 417.9 899.7 431.4 896.5 436.8" fill="none" stroke="#222" stroke-width="2.500" filter="url(#b1)" opacity="0.8"/>
<path d="M695.6 417.3C700.5 420.6 712.4 431.9 724.8 436.8C737.2 441.6 755.0 445.4 770.1 446.5C785.3 447.6 801.5 445.4 815.5 443.2C829.5 441.1 841.4 437.3 854.4 433.5C867.3 429.7 886.8 422.7 893.2 420.6" fill="none" stroke="#242424" stroke-width="6" filter="url(#b2)" opacity="0.85"/>
<path d="M702.1 433.5C707.5 436.2 723.7 445.9 734.5 449.7C745.3 453.5 761.5 455.1 766.9 456.2" fill="none" stroke="#1a1a1a" stroke-width="5" filter="url(#b2)"/>
<path d="M698.9 436.8C704.5 431.4 723.2 450.8 734.5 456.2C745.8 461.6 756.6 464.3 766.9 469.2C777.2 474.0 793.4 476.7 796.1 485.3C798.8 494.0 792.3 513.7 783.1 521.0C773.9 528.3 753.4 529.1 741.0 529.1C728.6 529.1 715.3 527.7 708.6 521.0C701.8 514.2 702.1 502.6 700.5 488.6C698.9 474.6 693.2 442.2 698.9 436.8Z" fill="#464646" filter="url(#b5)" opacity="0.9"/>
<path d="M734.5 469.2C738.8 467.0 757.7 474.6 766.9 478.9C776.1 483.2 789.6 490.7 789.6 495.1C789.6 499.4 775.0 505.3 766.9 504.8C758.8 504.2 746.4 497.8 741.0 491.8C735.6 485.9 730.2 471.3 734.5 469.2Z" fill="#242424" filter="url(#b3)" opacity="0.9"/>
<path d="M747.5 485.3C750.7 488.0 758.8 496.7 766.9 501.5C775.0 506.4 791.2 512.3 796.1 514.5" fill="none" stroke="#8a8a8a" stroke-width="3" filter="url(#b1)"/>
<path d="M705.4 456.2C707.5 454.0 719.1 458.9 721.5 462.7C724.0 466.5 722.1 476.7 719.9 478.9C717.8 481.0 711.0 479.4 708.6 475.6C706.2 471.9 703.2 458.4 705.4 456.2Z" fill="#8a8a8a" filter="url(#b2)" opacity="0.7"/>
<path d="M796.1 456.2C804.7 445.9 828.4 447.6 841.4 449.7C854.4 451.9 871.6 460.5 873.8 469.2C876.0 477.8 864.1 492.9 854.4 501.5C844.6 510.2 826.3 519.4 815.5 521.0C804.7 522.6 792.8 522.1 789.6 511.3C786.3 500.5 787.4 466.5 796.1 456.2Z" fill="#707070" filter="url(#b5)" opacity="0.85"/>
<path d="M828.4 221.3C842.5 221.9 857.6 225.4 870.6 232.7C883.5 240.0 896.5 251.6 906.2 265.1C915.9 278.6 923.5 296.9 928.9 313.7C934.3 330.4 937.5 349.3 938.6 365.5C939.7 381.7 938.6 396.8 935.3 410.8C932.1 424.9 926.2 436.8 919.2 449.7C912.1 462.7 904.0 476.7 893.2 488.6C882.4 500.5 868.9 512.9 854.4 521.0C839.8 529.1 822.0 535.6 805.8 537.2C789.6 538.8 771.2 532.3 757.2 530.7C743.1 529.1 730.7 530.2 721.5 527.5C712.4 524.8 705.5 519.9 702.1 514.5C698.8 509.1 702.8 503.7 701.5 495.1C700.1 486.4 696.9 475.6 694.0 462.7C691.2 449.7 686.5 432.4 684.3 417.3C682.1 402.2 679.7 386.0 681.1 372.0C682.4 357.9 686.7 346.1 692.4 333.1C698.1 320.1 705.9 307.2 715.1 294.2C724.2 281.3 735.6 266.1 747.5 255.4C759.3 244.6 772.8 235.1 786.3 229.4C799.8 223.8 814.4 220.8 828.4 221.3Z" fill="none" stroke="#141414" stroke-width="16" filter="url(#b5)" opacity="0.55"/>
</g>
<rect x="842.0" y="450.8" width="4" height="14" fill="#fff"/><path d="M856.7 461.2L864.7 466.2L865.7 475.2" stroke="#fff" stroke-width="1.800" fill="none"/>
<g filter="url(#dsp)">
<path d="M757.2 294.2C759.9 286.1 765.6 278.6 770.1 274.8C774.7 271.0 781.5 268.8 784.7 271.5C788.0 274.2 789.6 283.4 789.6 291.0C789.6 298.5 784.7 308.8 784.7 316.9C784.7 325.0 790.4 333.6 789.6 339.6C788.8 345.5 784.2 351.5 779.9 352.5C775.5 353.6 768.0 350.9 763.7 346.1C759.3 341.2 755.0 332.0 753.9 323.4C752.9 314.7 754.5 302.3 757.2 294.2Z" fill="#d87474" opacity="0.5"/>
<path d="M783.1 307.2C787.1 302.3 796.1 295.3 802.5 294.2C809.0 293.1 817.7 295.8 822.0 300.7C826.3 305.6 828.4 315.8 828.4 323.4C828.4 330.9 824.7 339.0 822.0 346.1C819.3 353.1 816.6 362.8 812.3 365.5C807.9 368.2 800.9 365.5 796.1 362.3C791.2 359.0 786.1 352.5 783.1 346.1C780.1 339.6 778.2 329.9 778.2 323.4C778.2 316.9 779.0 312.0 783.1 307.2Z" fill="#6a7ad0" opacity="0.5"/>
<path d="M792.8 294.2C793.9 291.8 802.0 287.7 805.8 287.7C809.6 287.7 814.4 291.5 815.5 294.2C816.6 296.9 815.0 302.6 812.3 303.9C809.6 305.3 802.5 303.9 799.3 302.3C796.1 300.7 791.7 296.7 792.8 294.2Z" fill="#d87474" opacity="0.5"/>
<path d="M825.2 307.2C827.4 303.9 836.0 302.3 841.4 300.7C846.8 299.1 853.3 295.3 857.6 297.5C861.9 299.6 866.8 308.3 867.3 313.7C867.9 319.1 863.0 324.5 860.8 329.9C858.7 335.3 857.6 341.2 854.4 346.1C851.1 350.9 845.7 356.3 841.4 359.0C837.1 361.7 831.1 364.4 828.4 362.3C825.7 360.1 824.1 350.9 825.2 346.1C826.3 341.2 834.4 337.4 834.9 333.1C835.5 328.8 830.1 324.5 828.4 320.1C826.8 315.8 823.0 310.4 825.2 307.2Z" fill="#d87474" opacity="0.47"/>
<path d="M834.9 316.9C836.5 314.2 845.5 314.7 847.9 316.9C850.3 319.1 851.1 327.2 849.5 329.9C847.9 332.6 840.6 335.3 838.2 333.1C835.7 330.9 833.3 319.6 834.9 316.9Z" fill="#6a5cc0" opacity="0.55"/>
<path d="M888.4 318.5C888.9 316.4 895.7 313.1 899.7 313.7C903.8 314.2 911.1 319.1 912.7 321.8C914.3 324.5 912.1 329.0 909.4 329.9C906.7 330.7 900.0 328.5 896.5 326.6C893.0 324.7 887.8 320.7 888.4 318.5Z" fill="#d87474" opacity="0.5"/>
<path d="M860.8 368.7C862.5 366.6 870.0 365.0 873.8 362.3C877.6 359.6 879.7 353.9 883.5 352.5C887.3 351.2 893.5 352.0 896.5 354.2C899.4 356.3 903.0 363.1 901.3 365.5C899.7 367.9 891.3 367.4 886.8 368.7C882.2 370.1 877.6 372.5 873.8 373.6C870.0 374.7 866.2 376.0 864.1 375.2C861.9 374.4 859.2 370.9 860.8 368.7Z" fill="#d87474" opacity="0.5"/>
<path d="M771.8 378.4C772.8 375.7 779.6 373.0 783.1 373.6C786.6 374.1 791.7 378.7 792.8 381.7C793.9 384.7 792.3 390.1 789.6 391.4C786.9 392.8 779.6 391.9 776.6 389.8C773.6 387.6 770.7 381.1 771.8 378.4Z" fill="#d070a0" opacity="0.5"/>
<path d="M741.0 316.9C742.1 311.5 746.4 309.9 749.1 313.7C751.8 317.4 754.2 332.6 757.2 339.6C760.2 346.6 767.4 352.5 766.9 355.8C766.4 359.0 758.0 360.6 753.9 359.0C749.9 357.4 744.8 353.1 742.6 346.1C740.4 339.0 739.9 322.3 741.0 316.9Z" fill="#98a858" opacity="0.65"/>
</g>
<path d="M708.6 391.4C710.8 388.2 716.7 376.8 721.5 372.0C726.4 367.1 731.8 364.4 737.7 362.3C743.7 360.1 750.7 359.0 757.2 359.0C763.7 359.0 773.4 361.7 776.6 362.3" fill="none" stroke="#86b060" stroke-width="1.400" opacity="0.85"/>
<path d="M728.0 362.3C730.2 358.5 738.2 347.1 741.0 339.6C743.8 332.0 742.2 315.8 744.9 316.9C747.6 318.0 751.9 338.5 757.2 346.1C762.5 353.6 773.4 359.6 776.6 362.3" fill="none" stroke="#9aa85a" stroke-width="1.300" opacity="0.75"/>
<path d="M730.0 359.0C732.1 355.4 740.4 344.8 742.9 337.6C745.4 330.5 742.5 314.8 744.9 316.3C747.2 317.7 751.9 338.4 757.2 346.1C762.5 353.7 773.4 359.6 776.6 362.3" fill="none" stroke="#9aa85a" stroke-width="1.300" opacity="0.75"/>
<path d="M731.9 355.1C734.1 351.8 742.7 341.9 744.9 335.3C747.0 328.7 742.8 313.7 744.9 315.5C746.9 317.3 751.9 338.3 757.2 346.1C762.5 353.9 773.4 359.6 776.6 362.3" fill="none" stroke="#9aa85a" stroke-width="1.300" opacity="0.75"/>
<path d="M726.7 350.9C728.9 347.9 736.7 338.8 739.7 332.8C742.7 326.7 742.0 312.4 744.9 314.6C747.8 316.8 751.9 338.1 757.2 346.1C762.5 354.0 773.4 359.6 776.6 362.3" fill="none" stroke="#9aa85a" stroke-width="1.300" opacity="0.75"/>
<path d="M730.6 346.1C732.8 343.4 741.2 335.3 743.6 329.9C746.0 324.5 742.6 311.0 744.9 313.7C747.1 316.4 751.9 338.0 757.2 346.1C762.5 354.2 773.4 359.6 776.6 362.3" fill="none" stroke="#9aa85a" stroke-width="1.300" opacity="0.75"/>
<path d="M732.6 339.6C734.7 337.3 743.5 330.5 745.5 326.0C747.6 321.4 742.9 309.0 744.9 312.4C746.8 315.7 751.9 337.7 757.2 346.1C762.5 354.4 773.4 359.6 776.6 362.3" fill="none" stroke="#9aa85a" stroke-width="1.300" opacity="0.75"/>
<path d="M729.3 333.1C731.5 331.3 739.7 325.8 742.3 322.1C744.9 318.4 742.4 307.1 744.9 311.1C747.4 315.1 751.9 337.5 757.2 346.1C762.5 354.6 773.4 359.6 776.6 362.3" fill="none" stroke="#9aa85a" stroke-width="1.300" opacity="0.75"/>
<path d="M733.9 326.6C736.0 325.2 745.0 321.0 746.8 318.2C748.7 315.4 743.1 305.1 744.9 309.8C746.6 314.4 751.9 337.3 757.2 346.1C762.5 354.8 773.4 359.6 776.6 362.3" fill="none" stroke="#9aa85a" stroke-width="1.300" opacity="0.75"/>
<ellipse cx="815" cy="346" rx="26" ry="44" fill="#e4e4f0" filter="url(#b8)" opacity="0.45" transform="rotate(-25 815 346)"/>
<path d="M799.3 352.5C800.9 356.9 803.1 369.8 809.0 378.4C815.0 387.1 829.5 396.3 834.9 404.4C840.3 412.5 840.3 423.3 841.4 427.0" fill="none" stroke="#a0a0e0" stroke-width="1.200" opacity="0.6"/>
<path d="M805.8 352.5C807.4 356.9 809.8 369.8 815.5 378.4C821.2 387.1 834.7 396.3 839.8 404.4C844.9 412.5 845.2 423.3 846.3 427.0" fill="none" stroke="#a0a0e0" stroke-width="1.200" opacity="0.6"/>
<path d="M812.3 352.5C813.9 356.9 817.7 369.8 822.0 378.4C826.3 387.1 834.4 396.3 838.2 404.4C841.9 412.5 843.6 423.3 844.6 427.0" fill="none" stroke="#a0a0e0" stroke-width="1.200" opacity="0.6"/>
<path d="M822.0 352.5C823.6 356.9 827.4 369.8 831.7 378.4C836.0 387.1 844.1 400.0 847.9 404.4C851.7 408.7 853.3 404.4 854.4 404.4" fill="none" stroke="#a0a0e0" stroke-width="1.200" opacity="0.6"/>
<path d="M828.4 352.5C830.1 356.9 833.3 369.8 838.2 378.4C843.0 387.1 853.3 400.0 857.6 404.4C861.9 408.7 863.0 404.4 864.1 404.4" fill="none" stroke="#a0a0e0" stroke-width="1.200" opacity="0.6"/>
<path d="M779.9 271.5C780.4 273.7 783.4 279.6 783.1 284.5C782.8 289.4 778.0 295.3 778.2 300.7C778.5 306.1 783.6 314.2 784.7 316.9" fill="none" stroke="#e07030" stroke-width="1.200" opacity="0.9"/>
</g></svg>
<svg style="left:0;top:0" width="1920" height="1080" viewBox="0 0 1920 1080">
<defs>
<filter id="b05"><feGaussianBlur stdDeviation="0.5"/></filter>
<filter id="b1"><feGaussianBlur stdDeviation="1"/></filter>
<filter id="b2"><feGaussianBlur stdDeviation="2"/></filter>
<filter id="b3"><feGaussianBlur stdDeviation="3"/></filter>
<filter id="b5"><feGaussianBlur stdDeviation="5"/></filter>
<filter id="b8"><feGaussianBlur stdDeviation="8"/></filter>
<filter id="b14"><feGaussianBlur stdDeviation="14"/></filter>
<filter id="gyA" x="0" y="0" width="100%" height="100%" color-interpolation-filters="sRGB"><feTurbulence type="fractalNoise" baseFrequency="0.048 0.043" numOctaves="2" seed="7"/><feColorMatrix type="matrix" values="1 0 0 0 0 1 0 0 0 0 1 0 0 0 0 0 0 0 0 1"/><feComponentTransfer><feFuncR type="table" tableValues="0.440 0.440 0.439 0.439 0.438 0.438 0.438 0.437 0.437 0.436 0.436 0.436 0.435 0.429 0.400 0.346 0.329 0.321 0.304 0.195 0.100 0.195 0.304 0.321 0.329 0.346 0.400 0.429 0.435 0.436 0.436 0.436 0.437 0.437 0.438 0.438 0.438 0.439 0.439 0.440 0.440"/><feFuncG type="table" tableValues="0.440 0.440 0.439 0.439 0.438 0.438 0.438 0.437 0.437 0.436 0.436 0.436 0.435 0.429 0.400 0.346 0.329 0.321 0.304 0.195 0.100 0.195 0.304 0.321 0.329 0.346 0.400 0.429 0.435 0.436 0.436 0.436 0.437 0.437 0.438 0.438 0.438 0.439 0.439 0.440 0.440"/><feFuncB type="table" tableValues="0.440 0.440 0.439 0.439 0.438 0.438 0.438 0.437 0.437 0.436 0.436 0.436 0.435 0.429 0.400 0.346 0.329 0.321 0.304 0.195 0.100 0.195 0.304 0.321 0.329 0.346 0.400 0.429 0.435 0.436 0.436 0.436 0.437 0.437 0.438 0.438 0.438 0.439 0.439 0.440 0.440"/></feComponentTransfer><feGaussianBlur stdDeviation="0.55"/></filter><filter id="grA" x="0" y="0" width="100%" height="100%" color-interpolation-filters="sRGB"><feTurbulence type="fractalNoise" baseFrequency="0.5" numOctaves="2" seed="3"/><feColorMatrix type="matrix" values="0 0 0 0 1 0 0 0 0 1 0 0 0 0 1 0.5 0 0 0 -0.25"/></filter><clipPath id="vpTR"><rect x="1173" y="153" width="729" height="423"/></clipPath><clipPath id="brA"><path d="M1638.3 390.0C1638.6 395.7 1638.7 401.6 1638.4 407.3C1638.1 413.0 1637.4 418.7 1636.5 424.3C1635.6 429.9 1634.6 435.5 1633.0 440.9C1631.4 446.2 1629.0 451.1 1626.8 456.1C1624.7 461.1 1622.8 466.6 1619.9 470.9C1617.0 475.2 1612.6 478.0 1609.3 481.9C1605.9 485.8 1603.2 490.4 1599.8 494.2C1596.4 498.1 1592.8 502.1 1588.8 505.1C1584.8 508.0 1580.2 509.7 1575.8 511.9C1571.4 514.1 1567.1 517.0 1562.5 518.2C1557.9 519.4 1552.9 518.6 1548.1 519.2C1543.4 519.7 1538.7 521.3 1534.0 521.4C1529.3 521.5 1524.5 520.3 1519.8 519.6C1515.1 518.9 1510.3 518.5 1505.8 517.2C1501.2 515.8 1496.5 514.1 1492.3 511.7C1488.1 509.3 1484.3 505.6 1480.4 502.6C1476.4 499.5 1472.3 497.0 1468.6 493.6C1464.9 490.3 1461.7 486.3 1458.3 482.5C1454.8 478.7 1451.0 475.2 1448.1 470.9C1445.3 466.5 1443.0 461.3 1441.1 456.2C1439.2 451.0 1438.5 445.2 1436.9 439.9C1435.3 434.6 1432.5 429.8 1431.5 424.3C1430.6 418.8 1431.4 412.7 1431.1 407.0C1430.8 401.3 1429.5 395.7 1429.7 390.0C1429.9 384.3 1431.4 378.6 1432.5 373.0C1433.5 367.4 1435.0 362.0 1436.0 356.4C1437.1 350.7 1437.1 344.5 1438.9 339.2C1440.7 334.0 1444.2 329.5 1446.8 324.7C1449.4 319.9 1452.0 315.3 1454.5 310.5C1457.1 305.7 1459.2 300.2 1462.2 295.9C1465.3 291.6 1468.9 287.9 1472.7 284.7C1476.4 281.5 1480.7 279.6 1484.5 276.7C1488.3 273.8 1491.6 269.5 1495.6 267.2C1499.6 264.9 1504.1 264.2 1508.4 262.9C1512.6 261.5 1516.8 259.6 1521.0 259.1C1525.3 258.5 1529.7 259.6 1534.0 259.4C1538.3 259.3 1542.7 257.8 1547.0 258.2C1551.3 258.7 1555.5 260.9 1559.7 262.4C1564.0 263.9 1568.3 265.0 1572.4 267.1C1576.5 269.3 1580.5 271.9 1584.2 275.0C1587.9 278.2 1591.1 282.5 1594.5 286.2C1597.9 289.9 1601.6 293.3 1604.7 297.3C1607.8 301.4 1610.6 306.0 1613.4 310.6C1616.1 315.2 1618.8 319.9 1621.1 324.8C1623.4 329.7 1625.3 335.0 1627.3 340.2C1629.2 345.4 1631.1 350.7 1632.7 356.1C1634.3 361.6 1635.8 367.1 1636.7 372.8C1637.6 378.4 1638.0 384.3 1638.3 390.0Z"/></clipPath>
</defs>
<g clip-path="url(#vpTR)">
<path d="M1661.5 391.0C1661.7 397.8 1661.6 404.6 1661.2 411.4C1660.7 418.1 1659.8 424.8 1658.6 431.4C1657.4 437.9 1655.7 444.4 1653.8 450.7C1651.8 457.0 1649.5 463.1 1646.8 469.0C1644.2 474.9 1641.2 480.6 1637.8 486.0C1634.5 491.4 1630.8 496.5 1626.9 501.3C1623.0 506.1 1618.7 510.6 1614.2 514.8C1609.7 518.9 1604.9 522.7 1600.0 526.1C1595.0 529.5 1589.8 532.5 1584.5 535.1C1579.2 537.7 1573.7 539.9 1568.1 541.7C1562.5 543.4 1556.7 544.8 1551.0 545.7C1545.2 546.6 1539.3 547.0 1533.5 547.0C1527.7 547.0 1521.8 546.6 1516.0 545.7C1510.3 544.8 1504.5 543.4 1498.9 541.7C1493.3 539.9 1487.8 537.7 1482.5 535.1C1477.2 532.5 1472.0 529.5 1467.0 526.1C1462.1 522.7 1457.3 518.9 1452.8 514.8C1448.3 510.6 1444.0 506.1 1440.1 501.3C1436.2 496.5 1432.5 491.4 1429.2 486.0C1425.8 480.6 1422.8 474.9 1420.2 469.0C1417.5 463.1 1415.2 457.0 1413.2 450.7C1411.3 444.4 1409.6 437.9 1408.4 431.4C1407.2 424.8 1406.3 418.1 1405.8 411.4C1405.4 404.6 1405.3 397.8 1405.5 391.0C1405.7 384.2 1406.4 377.4 1407.3 370.6C1408.3 363.9 1409.6 357.2 1411.3 350.6C1413.0 344.1 1415.0 337.6 1417.3 331.3C1419.6 325.0 1422.2 318.9 1425.1 313.0C1428.1 307.1 1431.3 301.4 1434.7 296.0C1438.2 290.6 1441.9 285.5 1445.9 280.7C1449.8 275.9 1454.0 271.4 1458.4 267.2C1462.7 263.1 1467.3 259.3 1472.0 255.9C1476.7 252.5 1481.6 249.5 1486.6 246.9C1491.5 244.3 1496.6 242.1 1501.8 240.3C1507.0 238.6 1512.3 237.2 1517.5 236.3C1522.8 235.4 1528.2 235.0 1533.5 235.0C1538.8 235.0 1544.2 235.4 1549.5 236.3C1554.7 237.2 1560.0 238.6 1565.2 240.3C1570.4 242.1 1575.5 244.3 1580.4 246.9C1585.4 249.5 1590.3 252.5 1595.0 255.9C1599.7 259.3 1604.3 263.1 1608.6 267.2C1613.0 271.4 1617.2 275.9 1621.1 280.7C1625.1 285.5 1628.8 290.6 1632.3 296.0C1635.7 301.4 1638.9 307.1 1641.9 313.0C1644.8 318.9 1647.4 325.0 1649.7 331.3C1652.0 337.6 1654.0 344.1 1655.7 350.6C1657.4 357.2 1658.7 363.9 1659.7 370.6C1660.6 377.4 1661.3 384.2 1661.5 391.0Z" fill="#333" stroke="#808080" stroke-width="1.7" filter="url(#b05)"/>
<path d="M1652.0 391.0C1652.2 397.4 1652.1 403.9 1651.7 410.2C1651.2 416.6 1650.5 422.9 1649.3 429.1C1648.2 435.3 1646.7 441.4 1644.9 447.4C1643.1 453.3 1640.9 459.1 1638.5 464.6C1636.0 470.2 1633.2 475.6 1630.1 480.7C1627.1 485.8 1623.7 490.6 1620.0 495.2C1616.4 499.7 1612.4 504.0 1608.3 507.9C1604.1 511.8 1599.7 515.4 1595.1 518.6C1590.5 521.8 1585.7 524.6 1580.8 527.1C1575.8 529.5 1570.7 531.6 1565.5 533.3C1560.3 534.9 1555.0 536.2 1549.7 537.0C1544.3 537.9 1538.9 538.3 1533.5 538.3C1528.1 538.3 1522.7 537.9 1517.3 537.0C1512.0 536.2 1506.7 534.9 1501.5 533.3C1496.3 531.6 1491.2 529.5 1486.2 527.1C1481.3 524.6 1476.5 521.8 1471.9 518.6C1467.3 515.4 1462.9 511.8 1458.7 507.9C1454.6 504.0 1450.6 499.7 1447.0 495.2C1443.3 490.6 1439.9 485.8 1436.9 480.7C1433.8 475.6 1431.0 470.2 1428.5 464.6C1426.1 459.1 1423.9 453.3 1422.1 447.4C1420.3 441.4 1418.8 435.3 1417.7 429.1C1416.5 422.9 1415.8 416.6 1415.3 410.2C1414.9 403.9 1414.8 397.4 1415.0 391.0C1415.2 384.6 1415.8 378.1 1416.7 371.8C1417.6 365.4 1418.9 359.1 1420.4 352.9C1421.9 346.7 1423.8 340.6 1425.9 334.6C1428.1 328.7 1430.5 322.9 1433.2 317.4C1435.9 311.8 1438.9 306.4 1442.1 301.3C1445.3 296.2 1448.8 291.4 1452.4 286.8C1456.1 282.3 1460.0 278.0 1464.0 274.1C1468.0 270.2 1472.3 266.6 1476.6 263.4C1481.0 260.2 1485.5 257.4 1490.1 254.9C1494.7 252.5 1499.4 250.4 1504.2 248.7C1509.0 247.1 1513.9 245.8 1518.7 245.0C1523.6 244.1 1528.6 243.7 1533.5 243.7C1538.4 243.7 1543.4 244.1 1548.3 245.0C1553.1 245.8 1558.0 247.1 1562.8 248.7C1567.6 250.4 1572.3 252.5 1576.9 254.9C1581.5 257.4 1586.0 260.2 1590.4 263.4C1594.7 266.6 1599.0 270.2 1603.0 274.1C1607.0 278.0 1610.9 282.3 1614.6 286.8C1618.2 291.4 1621.7 296.2 1624.9 301.3C1628.1 306.4 1631.1 311.8 1633.8 317.3C1636.5 322.9 1638.9 328.7 1641.1 334.6C1643.2 340.6 1645.1 346.7 1646.6 352.9C1648.1 359.1 1649.4 365.4 1650.3 371.8C1651.2 378.1 1651.8 384.6 1652.0 391.0Z" fill="#101010" stroke="#bdbdbd" stroke-width="5.5" filter="url(#b1)"/>
<path d="M1651.8 391.0C1652.0 397.4 1652.2 403.9 1651.7 410.2C1651.3 416.6 1650.3 422.9 1649.2 429.1C1648.1 435.3 1646.8 441.5 1645.0 447.4C1643.2 453.4 1641.1 459.2 1638.6 464.7C1636.1 470.2 1633.0 475.4 1629.8 480.4C1626.7 485.4 1623.2 490.1 1619.7 494.8C1616.1 499.4 1612.6 504.2 1608.5 508.2C1604.4 512.1 1599.6 515.2 1595.0 518.3C1590.4 521.4 1585.6 524.2 1580.7 526.8C1575.8 529.4 1570.8 532.1 1565.7 533.8C1560.5 535.5 1555.0 536.2 1549.7 537.0C1544.3 537.8 1538.9 538.7 1533.5 538.7C1528.1 538.7 1522.7 537.9 1517.3 537.0C1512.0 536.1 1506.6 535.2 1501.4 533.4C1496.3 531.7 1491.3 529.2 1486.4 526.7C1481.4 524.3 1476.5 521.8 1471.8 518.7C1467.2 515.6 1462.7 512.1 1458.5 508.2C1454.4 504.3 1450.6 499.7 1447.0 495.2C1443.3 490.6 1439.8 485.9 1436.7 480.8C1433.6 475.8 1430.7 470.4 1428.4 464.8C1426.0 459.1 1424.3 453.1 1422.5 447.2C1420.7 441.2 1418.6 435.4 1417.4 429.2C1416.2 423.0 1415.6 416.6 1415.2 410.2C1414.8 403.9 1414.9 397.4 1415.2 391.0C1415.5 384.6 1416.3 378.2 1417.2 371.8C1418.0 365.5 1418.6 359.0 1420.1 352.8C1421.5 346.6 1423.8 340.6 1426.0 334.6C1428.1 328.7 1430.4 322.8 1433.1 317.2C1435.7 311.6 1438.6 306.2 1441.8 301.1C1445.0 296.0 1448.6 291.2 1452.3 286.7C1455.9 282.1 1459.7 277.6 1463.8 273.7C1467.8 269.9 1472.3 266.7 1476.7 263.5C1481.0 260.3 1485.4 257.0 1490.0 254.6C1494.6 252.1 1499.4 250.5 1504.2 248.8C1509.0 247.1 1513.8 245.4 1518.7 244.5C1523.6 243.5 1528.6 243.1 1533.5 243.3C1538.4 243.4 1543.3 244.5 1548.2 245.4C1553.1 246.4 1558.0 247.5 1562.7 249.1C1567.5 250.8 1572.2 252.9 1576.8 255.2C1581.5 257.5 1586.2 259.8 1590.6 263.0C1595.0 266.1 1599.0 270.2 1603.0 274.2C1607.0 278.2 1611.0 282.2 1614.6 286.7C1618.3 291.3 1621.5 296.4 1624.7 301.5C1627.9 306.6 1631.1 311.8 1633.8 317.3C1636.5 322.9 1638.8 328.8 1641.0 334.7C1643.1 340.6 1644.9 346.7 1646.5 352.9C1648.0 359.1 1649.5 365.4 1650.4 371.8C1651.2 378.1 1651.5 384.6 1651.8 391.0Z" fill="none" stroke="#ececec" stroke-width="2.2" stroke-dasharray="14 5 7 9 22 6" filter="url(#b05)" opacity="0.8"/>
<path d="M1642.0 390.0C1642.2 396.0 1642.1 402.0 1641.7 407.9C1641.3 413.8 1640.6 419.7 1639.6 425.5C1638.6 431.2 1637.2 436.9 1635.6 442.4C1633.9 447.9 1632.0 453.3 1629.7 458.5C1627.5 463.7 1624.9 468.7 1622.1 473.4C1619.3 478.1 1616.2 482.7 1612.8 486.9C1609.5 491.1 1605.9 495.1 1602.1 498.7C1598.3 502.3 1594.2 505.7 1590.0 508.6C1585.8 511.6 1581.4 514.3 1576.9 516.6C1572.3 518.9 1567.6 520.8 1562.9 522.3C1558.1 523.9 1553.2 525.0 1548.3 525.8C1543.4 526.6 1538.4 527.0 1533.5 527.0C1528.6 527.0 1523.6 526.6 1518.7 525.8C1513.8 525.0 1508.9 523.9 1504.1 522.3C1499.4 520.8 1494.7 518.9 1490.1 516.6C1485.6 514.3 1481.2 511.6 1477.0 508.6C1472.8 505.7 1468.7 502.3 1464.9 498.7C1461.1 495.1 1457.5 491.1 1454.2 486.9C1450.8 482.7 1447.7 478.1 1444.9 473.4C1442.1 468.7 1439.5 463.7 1437.3 458.5C1435.0 453.3 1433.1 447.9 1431.4 442.4C1429.8 436.9 1428.4 431.2 1427.4 425.5C1426.4 419.7 1425.7 413.8 1425.3 407.9C1424.9 402.0 1424.8 396.0 1425.0 390.0C1425.2 384.0 1425.8 378.0 1426.6 372.1C1427.4 366.2 1428.6 360.3 1430.0 354.5C1431.4 348.8 1433.1 343.1 1435.1 337.6C1437.1 332.1 1439.3 326.7 1441.8 321.5C1444.3 316.3 1447.0 311.3 1449.9 306.6C1452.9 301.9 1456.0 297.3 1459.4 293.1C1462.7 288.9 1466.3 284.9 1470.0 281.3C1473.7 277.7 1477.5 274.3 1481.5 271.4C1485.5 268.4 1489.6 265.7 1493.8 263.4C1498.0 261.1 1502.4 259.2 1506.7 257.7C1511.1 256.1 1515.5 255.0 1520.0 254.2C1524.5 253.4 1529.0 253.0 1533.5 253.0C1538.0 253.0 1542.5 253.4 1547.0 254.2C1551.5 255.0 1555.9 256.1 1560.3 257.7C1564.6 259.2 1569.0 261.1 1573.2 263.4C1577.4 265.7 1581.5 268.4 1585.5 271.4C1589.5 274.3 1593.3 277.7 1597.0 281.3C1600.7 284.9 1604.3 288.9 1607.6 293.1C1611.0 297.3 1614.1 301.9 1617.1 306.6C1620.0 311.3 1622.7 316.3 1625.2 321.5C1627.7 326.7 1629.9 332.1 1631.9 337.6C1633.9 343.1 1635.6 348.8 1637.0 354.5C1638.4 360.3 1639.6 366.2 1640.4 372.1C1641.2 378.0 1641.8 384.0 1642.0 390.0Z" fill="none" stroke="#4c4c4c" stroke-width="1.5" filter="url(#b05)"/>
<g clip-path="url(#brA)">
<rect x="1400" y="240" width="270" height="300" filter="url(#gyA)"/>
<g filter="url(#b3)" opacity="0.93"><path d="M1511.2 395.7C1511.3 403.1 1510.4 411.1 1509.9 419.2C1509.3 427.3 1509.2 437.8 1507.7 444.4C1506.3 450.9 1503.2 453.6 1501.1 458.3C1499.0 463.0 1497.2 468.7 1495.1 472.8C1492.9 476.9 1490.5 481.8 1488.2 482.7C1486.0 483.6 1483.9 478.5 1481.6 478.1C1479.3 477.7 1476.8 481.3 1474.6 480.5C1472.4 479.6 1470.4 476.3 1468.6 472.8C1466.7 469.4 1464.3 466.4 1463.6 459.9C1463.0 453.4 1464.7 441.4 1464.6 433.8C1464.5 426.3 1463.0 421.6 1463.1 414.7C1463.3 407.8 1465.2 400.3 1465.5 392.5C1465.9 384.6 1464.5 375.4 1465.3 367.7C1466.1 359.9 1468.3 351.3 1470.3 345.9C1472.3 340.6 1475.4 341.7 1477.2 335.3C1479.1 329.0 1479.7 314.0 1481.5 307.9C1483.3 301.8 1485.9 299.9 1488.0 298.8C1490.1 297.7 1492.1 300.3 1494.0 301.5C1495.9 302.6 1498.0 302.2 1499.4 305.7C1500.9 309.1 1501.7 317.0 1502.7 322.3C1503.8 327.6 1504.4 333.0 1505.7 337.7C1507.0 342.3 1509.8 344.1 1510.5 350.2C1511.1 356.3 1509.4 366.7 1509.5 374.2C1509.6 381.8 1511.2 388.2 1511.2 395.7Z" fill="#707070"/><path d="M1601.3 392.3C1602.5 399.8 1603.3 408.5 1603.6 416.3C1604.0 424.0 1604.1 432.9 1603.2 438.8C1602.4 444.7 1600.0 447.7 1598.5 451.8C1596.9 455.9 1595.5 458.9 1594.1 463.3C1592.7 467.7 1591.8 475.4 1590.0 478.1C1588.3 480.8 1585.7 478.3 1583.5 479.7C1581.3 481.1 1579.0 487.3 1576.7 486.6C1574.4 485.9 1571.8 480.1 1569.6 475.7C1567.4 471.2 1565.4 465.9 1563.5 460.1C1561.7 454.3 1560.1 447.7 1558.7 441.0C1557.2 434.2 1555.3 427.3 1554.7 419.7C1554.1 412.1 1555.4 403.4 1555.3 395.6C1555.1 387.7 1553.5 379.6 1553.6 372.6C1553.8 365.6 1555.9 361.1 1556.2 353.4C1556.5 345.8 1554.6 331.5 1555.7 326.6C1556.8 321.6 1561.0 327.9 1562.6 323.8C1564.1 319.7 1563.6 304.2 1565.1 302.2C1566.6 300.2 1569.8 311.6 1571.8 311.9C1573.7 312.1 1575.2 302.6 1577.0 303.6C1578.9 304.7 1580.9 313.5 1582.8 318.0C1584.7 322.5 1586.5 326.2 1588.6 330.6C1590.6 335.1 1593.9 337.7 1595.2 344.6C1596.5 351.4 1595.4 363.6 1596.4 371.6C1597.4 379.5 1600.1 384.9 1601.3 392.3Z" fill="#707070"/></g>
<ellipse cx="1603" cy="362" rx="32" ry="40" fill="#555" filter="url(#b5)" opacity="0.95"/>
<ellipse cx="1610" cy="375" rx="14" ry="9" fill="#3e3e3e" filter="url(#b3)" opacity="0.8"/>
<ellipse cx="1598" cy="338" rx="10" ry="7" fill="#464646" filter="url(#b3)" opacity="0.7"/>
<path d="M1533.0 256.0C1532.8 261.7 1531.8 279.3 1532.0 290.0C1532.2 300.7 1534.2 310.0 1534.0 320.0C1533.8 330.0 1530.8 339.2 1531.0 350.0C1531.2 360.8 1534.7 373.3 1535.0 385.0C1535.3 396.7 1532.7 408.3 1533.0 420.0C1533.3 431.7 1536.7 443.3 1537.0 455.0C1537.3 466.7 1534.8 478.8 1535.0 490.0C1535.2 501.2 1537.5 516.7 1538.0 522.0" fill="none" stroke="#2a2a2a" stroke-width="2.4" filter="url(#b05)"/>
<rect x="1400" y="240" width="270" height="300" filter="url(#grA)" opacity="0.10"/>
</g>
<path d="M1638.3 390.0C1638.6 395.7 1638.7 401.6 1638.4 407.3C1638.1 413.0 1637.4 418.7 1636.5 424.3C1635.6 429.9 1634.6 435.5 1633.0 440.9C1631.4 446.2 1629.0 451.1 1626.8 456.1C1624.7 461.1 1622.8 466.6 1619.9 470.9C1617.0 475.2 1612.6 478.0 1609.3 481.9C1605.9 485.8 1603.2 490.4 1599.8 494.2C1596.4 498.1 1592.8 502.1 1588.8 505.1C1584.8 508.0 1580.2 509.7 1575.8 511.9C1571.4 514.1 1567.1 517.0 1562.5 518.2C1557.9 519.4 1552.9 518.6 1548.1 519.2C1543.4 519.7 1538.7 521.3 1534.0 521.4C1529.3 521.5 1524.5 520.3 1519.8 519.6C1515.1 518.9 1510.3 518.5 1505.8 517.2C1501.2 515.8 1496.5 514.1 1492.3 511.7C1488.1 509.3 1484.3 505.6 1480.4 502.6C1476.4 499.5 1472.3 497.0 1468.6 493.6C1464.9 490.3 1461.7 486.3 1458.3 482.5C1454.8 478.7 1451.0 475.2 1448.1 470.9C1445.3 466.5 1443.0 461.3 1441.1 456.2C1439.2 451.0 1438.5 445.2 1436.9 439.9C1435.3 434.6 1432.5 429.8 1431.5 424.3C1430.6 418.8 1431.4 412.7 1431.1 407.0C1430.8 401.3 1429.5 395.7 1429.7 390.0C1429.9 384.3 1431.4 378.6 1432.5 373.0C1433.5 367.4 1435.0 362.0 1436.0 356.4C1437.1 350.7 1437.1 344.5 1438.9 339.2C1440.7 334.0 1444.2 329.5 1446.8 324.7C1449.4 319.9 1452.0 315.3 1454.5 310.5C1457.1 305.7 1459.2 300.2 1462.2 295.9C1465.3 291.6 1468.9 287.9 1472.7 284.7C1476.4 281.5 1480.7 279.6 1484.5 276.7C1488.3 273.8 1491.6 269.5 1495.6 267.2C1499.6 264.9 1504.1 264.2 1508.4 262.9C1512.6 261.5 1516.8 259.6 1521.0 259.1C1525.3 258.5 1529.7 259.6 1534.0 259.4C1538.3 259.3 1542.7 257.8 1547.0 258.2C1551.3 258.7 1555.5 260.9 1559.7 262.4C1564.0 263.9 1568.3 265.0 1572.4 267.1C1576.5 269.3 1580.5 271.9 1584.2 275.0C1587.9 278.2 1591.1 282.5 1594.5 286.2C1597.9 289.9 1601.6 293.3 1604.7 297.3C1607.8 301.4 1610.6 306.0 1613.4 310.6C1616.1 315.2 1618.8 319.9 1621.1 324.8C1623.4 329.7 1625.3 335.0 1627.3 340.2C1629.2 345.4 1631.1 350.7 1632.7 356.1C1634.3 361.6 1635.8 367.1 1636.7 372.8C1637.6 378.4 1638.0 384.3 1638.3 390.0Z" fill="none" stroke="#1c1c1c" stroke-width="2" filter="url(#b1)"/>
</g></svg>
<svg style="left:0;top:0" width="1920" height="1080" viewBox="0 0 1920 1080">
<defs>
<filter id="b05"><feGaussianBlur stdDeviation="0.5"/></filter>
<filter id="b1"><feGaussianBlur stdDeviation="1"/></filter>
<filter id="b2"><feGaussianBlur stdDeviation="2"/></filter>
<filter id="b3"><feGaussianBlur stdDeviation="3"/></filter>
<filter id="b5"><feGaussianBlur stdDeviation="5"/></filter>
<filter id="b8"><feGaussianBlur stdDeviation="8"/></filter>
<filter id="b14"><feGaussianBlur stdDeviation="14"/></filter>
<filter id="gyC" x="0" y="0" width="100%" height="100%" color-interpolation-filters="sRGB"><feTurbulence type="fractalNoise" baseFrequency="0.035 0.035" numOctaves="2" seed="21"/><feColorMatrix type="matrix" values="1 0 0 0 0 1 0 0 0 0 1 0 0 0 0 0 0 0 0 1"/><feComponentTransfer><feFuncR type="table" tableValues="0.480 0.480 0.479 0.479 0.478 0.478 0.478 0.477 0.477 0.477 0.476 0.476 0.475 0.475 0.452 0.405 0.366 0.357 0.339 0.255 0.200 0.255 0.339 0.357 0.366 0.405 0.452 0.475 0.475 0.476 0.476 0.477 0.477 0.477 0.478 0.478 0.478 0.479 0.479 0.480 0.480"/><feFuncG type="table" tableValues="0.480 0.480 0.479 0.479 0.478 0.478 0.478 0.477 0.477 0.477 0.476 0.476 0.475 0.475 0.452 0.405 0.366 0.357 0.339 0.255 0.200 0.255 0.339 0.357 0.366 0.405 0.452 0.475 0.475 0.476 0.476 0.477 0.477 0.477 0.478 0.478 0.478 0.479 0.479 0.480 0.480"/><feFuncB type="table" tableValues="0.480 0.480 0.479 0.479 0.478 0.478 0.478 0.477 0.477 0.477 0.476 0.476 0.475 0.475 0.452 0.405 0.366 0.357 0.339 0.255 0.200 0.255 0.339 0.357 0.366 0.405 0.452 0.475 0.475 0.476 0.476 0.477 0.477 0.477 0.478 0.478 0.478 0.479 0.479 0.480 0.480"/></feComponentTransfer><feGaussianBlur stdDeviation="0.8"/></filter><filter id="grC" x="0" y="0" width="100%" height="100%" color-interpolation-filters="sRGB"><feTurbulence type="fractalNoise" baseFrequency="0.5" numOctaves="2" seed="5"/><feColorMatrix type="matrix" values="0 0 0 0 1 0 0 0 0 1 0 0 0 0 1 0.5 0 0 0 -0.25"/></filter><filter id="txC" x="0" y="0" width="100%" height="100%" color-interpolation-filters="sRGB"><feTurbulence type="fractalNoise" baseFrequency="0.032 0.024" numOctaves="2" seed="9"/><feColorMatrix type="matrix" values="0.920 0 0 0 -0.130 0.920 0 0 0 -0.130 0.920 0 0 0 -0.130 0 0 0 0 1"/><feGaussianBlur stdDeviation="1.2"/></filter><clipPath id="vpBL"><rect x="437" y="578" width="734" height="414"/></clipPath><clipPath id="brC"><path d="M797.0 628.0C811.5 628.0 826.2 629.3 840.0 633.0C853.8 636.7 868.0 642.5 880.0 650.0C892.0 657.5 903.2 667.2 912.0 678.0C920.8 688.8 927.8 701.3 933.0 715.0C938.2 728.7 941.8 745.0 943.0 760.0C944.2 775.0 942.5 790.8 940.0 805.0C937.5 819.2 933.7 832.8 928.0 845.0C922.3 857.2 914.7 869.5 906.0 878.0C897.3 886.5 886.0 893.7 876.0 896.0C866.0 898.3 854.3 895.7 846.0 892.0C837.7 888.3 831.7 876.3 826.0 874.0C820.3 871.7 816.8 876.3 812.0 878.0C807.2 879.7 802.0 884.0 797.0 884.0C792.0 884.0 786.8 879.7 782.0 878.0C777.2 876.3 773.7 871.7 768.0 874.0C762.3 876.3 756.3 888.3 748.0 892.0C739.7 895.7 728.0 898.3 718.0 896.0C708.0 893.7 696.7 886.5 688.0 878.0C679.3 869.5 671.8 857.2 666.0 845.0C660.2 832.8 655.7 819.2 653.0 805.0C650.3 790.8 648.8 775.0 650.0 760.0C651.2 745.0 654.8 728.7 660.0 715.0C665.2 701.3 672.2 688.8 681.0 678.0C689.8 667.2 701.0 657.5 713.0 650.0C725.0 642.5 739.0 636.7 753.0 633.0C767.0 629.3 782.5 628.0 797.0 628.0Z"/></clipPath><clipPath id="hdC"><path d="M644.5 1000.0C643.3 990.0 639.8 960.7 637.5 940.0C635.2 919.3 631.7 895.8 630.5 875.6C629.4 855.4 629.8 837.7 630.4 818.8C631.0 799.9 631.1 780.4 634.2 762.4C637.3 744.3 642.1 726.3 649.0 710.5C655.8 694.7 664.1 679.6 675.1 667.8C686.0 655.9 701.0 646.3 714.7 639.4C728.4 632.5 743.8 628.9 757.2 626.3C770.6 623.6 782.4 623.5 795.0 623.5C807.6 623.5 819.4 623.6 832.8 626.3C846.2 628.9 861.6 632.5 875.3 639.4C889.0 646.3 904.0 655.9 914.9 667.8C925.9 679.6 934.4 694.7 941.0 710.5C947.7 726.3 951.9 744.4 954.8 762.4C957.7 780.5 958.0 799.9 958.6 818.8C959.2 837.7 959.6 855.4 958.5 875.6C957.3 895.8 954.0 919.3 951.5 940.0C949.0 960.7 944.8 990.0 943.5 1000.0Z"/></clipPath><clipPath id="imC"><path d="M560 600L1010 612L1000 1000L548 1000Z"/></clipPath>
</defs>
<g clip-path="url(#vpBL)"><g clip-path="url(#imC)">
<path d="M634.0 1000.0C632.8 990.0 629.2 960.0 627.0 940.0C624.8 920.0 622.2 900.0 621.0 880.0C619.8 860.0 619.5 840.0 620.0 820.0C620.5 800.0 620.7 779.2 624.0 760.0C627.3 740.8 632.7 721.7 640.0 705.0C647.3 688.3 656.3 672.5 668.0 660.0C679.7 647.5 695.5 637.3 710.0 630.0C724.5 622.7 740.8 618.8 755.0 616.0C769.2 613.2 781.7 613.0 795.0 613.0C808.3 613.0 820.8 613.2 835.0 616.0C849.2 618.8 865.5 622.7 880.0 630.0C894.5 637.3 910.3 647.5 922.0 660.0C933.7 672.5 942.8 688.3 950.0 705.0C957.2 721.7 961.8 740.8 965.0 760.0C968.2 779.2 968.5 800.0 969.0 820.0C969.5 840.0 969.2 860.0 968.0 880.0C966.8 900.0 964.3 920.0 962.0 940.0C959.7 960.0 955.3 990.0 954.0 1000.0Z" fill="#2c2c2c" stroke="#5a5a5a" stroke-width="1.6" filter="url(#b05)"/>
<path d="M642.5 1000.0C641.3 990.0 637.8 960.6 635.5 940.0C633.2 919.4 629.9 896.6 628.7 876.4C627.5 856.3 627.9 838.1 628.4 819.0C629.0 799.9 629.1 780.2 632.3 761.9C635.4 743.7 640.3 725.4 647.2 709.4C654.2 693.5 662.6 678.3 673.7 666.3C684.8 654.3 700.0 644.6 713.8 637.6C727.7 630.6 743.3 627.0 756.8 624.3C770.3 621.6 782.3 621.5 795.0 621.5C807.7 621.5 819.7 621.6 833.2 624.3C846.7 627.0 862.3 630.6 876.2 637.6C890.0 644.6 905.2 654.3 916.3 666.3C927.4 678.3 936.0 693.5 942.8 709.4C949.5 725.4 953.8 743.7 956.7 761.9C959.7 780.2 960.0 799.9 960.6 819.0C961.1 838.1 961.5 856.3 960.3 876.4C959.1 896.6 956.0 919.4 953.5 940.0C951.0 960.6 946.8 990.0 945.5 1000.0Z" fill="#3a3a3a" stroke="#bcbcbc" stroke-width="3" filter="url(#b05)"/>
<g clip-path="url(#hdC)">
<rect x="600" y="600" width="400" height="400" fill="#565656"/>
<rect x="610" y="840" width="370" height="160" filter="url(#txC)"/>
<path d="M628 780C630 840 634 900 640 1000L668 1000C660 930 650 860 640 790Z" fill="#6a6a6a" filter="url(#b2)"/>
<path d="M962 780C962 840 958 900 950 1000L922 1000C932 930 944 860 952 790Z" fill="#6a6a6a" filter="url(#b2)"/>
<path d="M797.0 628.0C811.5 628.0 826.2 629.3 840.0 633.0C853.8 636.7 868.0 642.5 880.0 650.0C892.0 657.5 903.2 667.2 912.0 678.0C920.8 688.8 927.8 701.3 933.0 715.0C938.2 728.7 941.8 745.0 943.0 760.0C944.2 775.0 942.5 790.8 940.0 805.0C937.5 819.2 933.7 832.8 928.0 845.0C922.3 857.2 914.7 869.5 906.0 878.0C897.3 886.5 886.0 893.7 876.0 896.0C866.0 898.3 854.3 895.7 846.0 892.0C837.7 888.3 831.7 876.3 826.0 874.0C820.3 871.7 816.8 876.3 812.0 878.0C807.2 879.7 802.0 884.0 797.0 884.0C792.0 884.0 786.8 879.7 782.0 878.0C777.2 876.3 773.7 871.7 768.0 874.0C762.3 876.3 756.3 888.3 748.0 892.0C739.7 895.7 728.0 898.3 718.0 896.0C708.0 893.7 696.7 886.5 688.0 878.0C679.3 869.5 671.8 857.2 666.0 845.0C660.2 832.8 655.7 819.2 653.0 805.0C650.3 790.8 648.8 775.0 650.0 760.0C651.2 745.0 654.8 728.7 660.0 715.0C665.2 701.3 672.2 688.8 681.0 678.0C689.8 667.2 701.0 657.5 713.0 650.0C725.0 642.5 739.0 636.7 753.0 633.0C767.0 629.3 782.5 628.0 797.0 628.0Z" fill="#141414" stroke="#141414" stroke-width="17" filter="url(#b1)"/>
<path d="M662.1 847.5C659.8 840.6 651.4 820.8 648.7 806.2C645.9 791.5 644.4 775.2 645.6 759.7C646.8 744.2 650.6 727.3 655.9 713.2C661.2 699.1 668.4 686.2 677.5 675.0C686.6 663.8 698.1 653.8 710.5 646.0C722.8 638.3 737.3 632.3 751.7 628.5C766.1 624.7 782.1 623.3 797.0 623.3C811.9 623.3 827.0 624.7 841.3 628.5C855.5 632.3 870.1 638.3 882.5 646.0C894.9 653.8 906.4 663.8 915.5 675.0C924.5 686.2 931.8 699.1 937.1 713.2C942.4 727.3 946.2 744.2 947.4 759.7C948.6 775.2 946.9 791.5 944.3 806.2C941.7 820.8 934.0 840.6 931.9 847.5" fill="none" stroke="#484848" stroke-width="1.5" filter="url(#b05)"/>
</g>
<g clip-path="url(#brC)">
<rect x="640" y="620" width="310" height="290" filter="url(#gyC)"/>
<g filter="url(#b5)" opacity="0.92"><ellipse cx="737" cy="745" rx="36" ry="42" fill="#787878"/><ellipse cx="857" cy="745" rx="36" ry="42" fill="#787878"/><ellipse cx="797" cy="800" rx="52" ry="45" fill="#727272"/><ellipse cx="725" cy="838" rx="30" ry="14" fill="#727272"/><ellipse cx="870" cy="838" rx="30" ry="14" fill="#727272"/></g>
<ellipse cx="885" cy="715" rx="45" ry="55" fill="#666" filter="url(#b8)" opacity="0.9"/>
<path d="M797 628C795 650 799 670 796 690C795 705 798 715 797 722" fill="none" stroke="#303030" stroke-width="2" filter="url(#b05)"/>
<path d="M778 722C770 735 768 748 772 756C780 752 790 748 796 750C802 748 812 752 820 756C824 748 822 735 814 722C808 732 802 738 796 738C790 738 784 732 778 722Z" fill="#1c1c1c" filter="url(#b1)"/>
<path d="M796 752V800" stroke="#333" stroke-width="2" filter="url(#b1)"/>
<path d="M770 850C780 835 812 835 824 850C830 865 815 872 797 872C780 872 765 865 770 850Z" fill="#151515" filter="url(#b2)"/>
<ellipse cx="797" cy="880" rx="16" ry="12" fill="#5e5e5e" filter="url(#b2)"/>
<path d="M722 856C735 846 752 850 756 862M872 856C859 846 842 850 838 862" fill="none" stroke="#2c2c2c" stroke-width="3" filter="url(#b1)"/>
<rect x="640" y="620" width="310" height="290" filter="url(#grC)" opacity="0.10"/>
</g>
<path d="M797.0 628.0C811.5 628.0 826.2 629.3 840.0 633.0C853.8 636.7 868.0 642.5 880.0 650.0C892.0 657.5 903.2 667.2 912.0 678.0C920.8 688.8 927.8 701.3 933.0 715.0C938.2 728.7 941.8 745.0 943.0 760.0C944.2 775.0 942.5 790.8 940.0 805.0C937.5 819.2 933.7 832.8 928.0 845.0C922.3 857.2 914.7 869.5 906.0 878.0C897.3 886.5 886.0 893.7 876.0 896.0C866.0 898.3 854.3 895.7 846.0 892.0C837.7 888.3 831.7 876.3 826.0 874.0C820.3 871.7 816.8 876.3 812.0 878.0C807.2 879.7 802.0 884.0 797.0 884.0C792.0 884.0 786.8 879.7 782.0 878.0C777.2 876.3 773.7 871.7 768.0 874.0C762.3 876.3 756.3 888.3 748.0 892.0C739.7 895.7 728.0 898.3 718.0 896.0C708.0 893.7 696.7 886.5 688.0 878.0C679.3 869.5 671.8 857.2 666.0 845.0C660.2 832.8 655.7 819.2 653.0 805.0C650.3 790.8 648.8 775.0 650.0 760.0C651.2 745.0 654.8 728.7 660.0 715.0C665.2 701.3 672.2 688.8 681.0 678.0C689.8 667.2 701.0 657.5 713.0 650.0C725.0 642.5 739.0 636.7 753.0 633.0C767.0 629.3 782.5 628.0 797.0 628.0Z" fill="none" stroke="#1a1a1a" stroke-width="2" filter="url(#b1)"/>
<g clip-path="url(#hdC)">
<g filter="url(#b2)"><ellipse cx="797" cy="915" rx="24" ry="20" fill="#1a1a1a"/><ellipse cx="740" cy="905" rx="22" ry="8" fill="#222"/><ellipse cx="856" cy="905" rx="22" ry="8" fill="#222"/><ellipse cx="905" cy="915" rx="14" ry="18" fill="#181818"/><ellipse cx="690" cy="915" rx="14" ry="16" fill="#2a2a2a"/></g>
<g filter="url(#b1)"><ellipse cx="729" cy="962" rx="5" ry="13" fill="#f4f4f4" transform="rotate(-22 729 962)"/><ellipse cx="860" cy="936" rx="4.500" ry="12" fill="#f0f0f0" transform="rotate(24 860 936)"/><ellipse cx="725" cy="906" rx="7" ry="4" fill="#d8d8d8" transform="rotate(-30 725 906)"/><ellipse cx="684" cy="966" rx="3" ry="7" fill="#c8c8c8"/><ellipse cx="905" cy="950" rx="3" ry="6" fill="#9a9a9a"/><path d="M775 985L805 975L820 985L790 992Z" fill="#909090"/></g>
<path d="M654 920C648 935 652 960 668 975" fill="none" stroke="#8a8a8a" stroke-width="4" filter="url(#b1)"/><path d="M938 920C946 935 940 960 926 975" fill="none" stroke="#8a8a8a" stroke-width="4" filter="url(#b1)"/>
</g>
</g></g></svg>
<svg style="left:0;top:0" width="1920" height="1080" viewBox="0 0 1920 1080">
<defs>
<filter id="b05"><feGaussianBlur stdDeviation="0.5"/></filter>
<filter id="b1"><feGaussianBlur stdDeviation="1"/></filter>
<filter id="b2"><feGaussianBlur stdDeviation="2"/></filter>
<filter id="b3"><feGaussianBlur stdDeviation="3"/></filter>
<filter id="b5"><feGaussianBlur stdDeviation="5"/></filter>
<filter id="b8"><feGaussianBlur stdDeviation="8"/></filter>
<filter id="b14"><feGaussianBlur stdDeviation="14"/></filter>
<filter id="gyS" x="0" y="0" width="100%" height="100%" color-interpolation-filters="sRGB"><feTurbulence type="fractalNoise" baseFrequency="0.034 0.037" numOctaves="2" seed="33"/><feColorMatrix type="matrix" values="1 0 0 0 0 1 0 0 0 0 1 0 0 0 0 0 0 0 0 1"/><feComponentTransfer><feFuncR type="table" tableValues="0.465 0.465 0.464 0.464 0.463 0.463 0.463 0.462 0.462 0.462 0.461 0.461 0.460 0.460 0.437 0.392 0.356 0.347 0.329 0.245 0.190 0.245 0.329 0.347 0.356 0.392 0.437 0.460 0.460 0.461 0.461 0.462 0.462 0.462 0.463 0.463 0.463 0.464 0.464 0.465 0.465"/><feFuncG type="table" tableValues="0.465 0.465 0.464 0.464 0.463 0.463 0.463 0.462 0.462 0.462 0.461 0.461 0.460 0.460 0.437 0.392 0.356 0.347 0.329 0.245 0.190 0.245 0.329 0.347 0.356 0.392 0.437 0.460 0.460 0.461 0.461 0.462 0.462 0.462 0.463 0.463 0.463 0.464 0.464 0.465 0.465"/><feFuncB type="table" tableValues="0.465 0.465 0.464 0.464 0.463 0.463 0.463 0.462 0.462 0.462 0.461 0.461 0.460 0.460 0.437 0.392 0.356 0.347 0.329 0.245 0.190 0.245 0.329 0.347 0.356 0.392 0.437 0.460 0.460 0.461 0.461 0.462 0.462 0.462 0.463 0.463 0.463 0.464 0.464 0.465 0.465"/></feComponentTransfer><feGaussianBlur stdDeviation="0.8"/></filter><filter id="grS" x="0" y="0" width="100%" height="100%" color-interpolation-filters="sRGB"><feTurbulence type="fractalNoise" baseFrequency="0.5" numOctaves="2" seed="8"/><feColorMatrix type="matrix" values="0 0 0 0 1 0 0 0 0 1 0 0 0 0 1 0.5 0 0 0 -0.25"/></filter><filter id="txS" x="0" y="0" width="100%" height="100%" color-interpolation-filters="sRGB"><feTurbulence type="fractalNoise" baseFrequency="0.03 0.026" numOctaves="2" seed="14"/><feColorMatrix type="matrix" values="0.880 0 0 0 -0.060 0.880 0 0 0 -0.060 0.880 0 0 0 -0.060 0 0 0 0 1"/><feGaussianBlur stdDeviation="1.2"/></filter><filter id="txS2" x="0" y="0" width="100%" height="100%" color-interpolation-filters="sRGB"><feTurbulence type="fractalNoise" baseFrequency="0.012 0.09" numOctaves="2" seed="4"/><feColorMatrix type="matrix" values="0.560 0 0 0 0.080 0.560 0 0 0 0.080 0.560 0 0 0 0.080 0 0 0 0 1"/><feGaussianBlur stdDeviation="0.8"/></filter><clipPath id="vpBR"><rect x="1173" y="578" width="729" height="414"/></clipPath><clipPath id="brS"><path d="M1405.0 775.0C1405.0 764.5 1406.2 749.0 1410.0 737.0C1413.8 725.0 1420.5 712.5 1428.0 703.0C1435.5 693.5 1443.8 686.5 1455.0 680.0C1466.2 673.5 1480.8 667.8 1495.0 664.0C1509.2 660.2 1524.2 658.2 1540.0 657.0C1555.8 655.8 1573.3 655.7 1590.0 657.0C1606.7 658.3 1625.0 660.7 1640.0 665.0C1655.0 669.3 1668.3 675.2 1680.0 683.0C1691.7 690.8 1702.2 700.8 1710.0 712.0C1717.8 723.2 1723.3 736.2 1727.0 750.0C1730.7 763.8 1732.3 780.0 1732.0 795.0C1731.7 810.0 1729.5 825.8 1725.0 840.0C1720.5 854.2 1712.5 869.2 1705.0 880.0C1697.5 890.8 1689.2 898.0 1680.0 905.0C1670.8 912.0 1660.0 918.2 1650.0 922.0C1640.0 925.8 1629.7 929.0 1620.0 928.0C1610.3 927.0 1600.0 921.2 1592.0 916.0C1584.0 910.8 1579.8 901.7 1572.0 897.0C1564.2 892.3 1553.7 887.5 1545.0 888.0C1536.3 888.5 1528.3 898.3 1520.0 900.0C1511.7 901.7 1503.3 901.3 1495.0 898.0C1486.7 894.7 1476.2 887.2 1470.0 880.0C1463.8 872.8 1461.7 863.3 1458.0 855.0C1454.3 846.7 1453.5 836.7 1448.0 830.0C1442.5 823.3 1431.3 820.0 1425.0 815.0C1418.7 810.0 1413.3 806.7 1410.0 800.0C1406.7 793.3 1405.0 785.5 1405.0 775.0Z"/></clipPath><clipPath id="hdS"><path d="M1377.9 993.9C1375.7 987.4 1368.5 968.6 1364.7 954.8C1361.0 941.0 1356.3 924.0 1355.5 911.0C1354.7 898.1 1356.8 886.2 1360.0 877.0C1363.1 867.8 1372.8 863.7 1374.2 855.6C1375.6 847.6 1369.2 838.8 1368.4 828.8C1367.6 818.7 1367.9 807.0 1369.5 795.2C1371.1 783.4 1372.6 771.6 1378.3 757.9C1384.0 744.2 1392.2 727.1 1403.5 713.0C1414.7 698.9 1429.2 684.4 1445.8 673.2C1462.4 662.0 1483.3 651.8 1503.2 645.9C1523.0 639.9 1542.8 638.2 1565.0 637.5C1587.2 636.8 1615.0 637.8 1636.5 641.7C1658.0 645.7 1678.2 651.9 1694.2 661.2C1710.2 670.5 1722.8 683.9 1732.7 697.4C1742.7 711.0 1749.6 725.4 1753.9 742.5C1758.2 759.6 1759.3 780.8 1758.5 800.0C1757.7 819.2 1753.5 839.9 1748.9 857.5C1744.3 875.0 1737.0 890.2 1730.8 905.4C1724.7 920.7 1717.6 934.4 1712.0 949.0C1706.4 963.5 1699.7 985.6 1697.2 993.0Z"/></clipPath><clipPath id="hdS0"><path d="M1372.0 1000.0C1369.7 993.3 1362.0 974.2 1358.0 960.0C1354.0 945.8 1349.0 928.3 1348.0 915.0C1347.0 901.7 1349.0 889.5 1352.0 880.0C1355.0 870.5 1364.7 866.3 1366.0 858.0C1367.3 849.7 1360.8 840.5 1360.0 830.0C1359.2 819.5 1359.3 807.3 1361.0 795.0C1362.7 782.7 1364.2 770.3 1370.0 756.0C1375.8 741.7 1384.3 723.8 1396.0 709.0C1407.7 694.2 1422.7 678.8 1440.0 667.0C1457.3 655.2 1479.2 644.3 1500.0 638.0C1520.8 631.7 1541.7 629.7 1565.0 629.0C1588.3 628.3 1617.5 629.7 1640.0 634.0C1662.5 638.3 1683.3 645.2 1700.0 655.0C1716.7 664.8 1729.7 678.8 1740.0 693.0C1750.3 707.2 1757.5 722.2 1762.0 740.0C1766.5 757.8 1767.8 780.0 1767.0 800.0C1766.2 820.0 1761.8 841.7 1757.0 860.0C1752.2 878.3 1744.5 894.2 1738.0 910.0C1731.5 925.8 1724.0 940.0 1718.0 955.0C1712.0 970.0 1704.7 992.5 1702.0 1000.0Z"/></clipPath><clipPath id="imS"><path d="M1330 600L1565 619L1790 643L1790 1000L1540 1000L1330 962Z"/></clipPath><clipPath id="cbS"><path d="M1592.0 916.0C1588.7 908.0 1593.7 888.0 1600.0 880.0C1606.3 872.0 1618.3 869.3 1630.0 868.0C1641.7 866.7 1658.3 869.2 1670.0 872.0C1681.7 874.8 1698.3 879.3 1700.0 885.0C1701.7 890.7 1688.3 899.8 1680.0 906.0C1671.7 912.2 1660.0 918.3 1650.0 922.0C1640.0 925.7 1629.7 929.0 1620.0 928.0C1610.3 927.0 1595.3 924.0 1592.0 916.0Z"/></clipPath>
</defs>
<g clip-path="url(#vpBR)"><g clip-path="url(#imS)">
<path d="M1372.0 1000.0C1369.7 993.3 1362.0 974.2 1358.0 960.0C1354.0 945.8 1349.0 928.3 1348.0 915.0C1347.0 901.7 1349.0 889.5 1352.0 880.0C1355.0 870.5 1364.7 866.3 1366.0 858.0C1367.3 849.7 1360.8 840.5 1360.0 830.0C1359.2 819.5 1359.3 807.3 1361.0 795.0C1362.7 782.7 1364.2 770.3 1370.0 756.0C1375.8 741.7 1384.3 723.8 1396.0 709.0C1407.7 694.2 1422.7 678.8 1440.0 667.0C1457.3 655.2 1479.2 644.3 1500.0 638.0C1520.8 631.7 1541.7 629.7 1565.0 629.0C1588.3 628.3 1617.5 629.7 1640.0 634.0C1662.5 638.3 1683.3 645.2 1700.0 655.0C1716.7 664.8 1729.7 678.8 1740.0 693.0C1750.3 707.2 1757.5 722.2 1762.0 740.0C1766.5 757.8 1767.8 780.0 1767.0 800.0C1766.2 820.0 1761.8 841.7 1757.0 860.0C1752.2 878.3 1744.5 894.2 1738.0 910.0C1731.5 925.8 1724.0 940.0 1718.0 955.0C1712.0 970.0 1704.7 992.5 1702.0 1000.0Z" fill="#2c2c2c" stroke="#5a5a5a" stroke-width="1.6" filter="url(#b05)"/>
<path d="M1377.9 993.9C1375.7 987.4 1368.5 968.6 1364.7 954.8C1361.0 941.0 1356.3 924.0 1355.5 911.0C1354.7 898.1 1356.8 886.2 1360.0 877.0C1363.1 867.8 1372.8 863.7 1374.2 855.6C1375.6 847.6 1369.2 838.8 1368.4 828.8C1367.6 818.7 1367.9 807.0 1369.5 795.2C1371.1 783.4 1372.6 771.6 1378.3 757.9C1384.0 744.2 1392.2 727.1 1403.5 713.0C1414.7 698.9 1429.2 684.4 1445.8 673.2C1462.4 662.0 1483.3 651.8 1503.2 645.9C1523.0 639.9 1542.8 638.2 1565.0 637.5C1587.2 636.8 1615.0 637.8 1636.5 641.7C1658.0 645.7 1678.2 651.9 1694.2 661.2C1710.2 670.5 1722.8 683.9 1732.7 697.4C1742.7 711.0 1749.6 725.4 1753.9 742.5C1758.2 759.6 1759.3 780.8 1758.5 800.0C1757.7 819.2 1753.5 839.9 1748.9 857.5C1744.3 875.0 1737.0 890.2 1730.8 905.4C1724.7 920.7 1717.6 934.4 1712.0 949.0C1706.4 963.5 1699.7 985.6 1697.2 993.0Z" fill="#3a3a3a" stroke="#bcbcbc" stroke-width="3" filter="url(#b05)"/>
<g clip-path="url(#hdS)">
<rect x="1340" y="600" width="440" height="400" fill="#565656"/>
<rect x="1340" y="812" width="440" height="190" filter="url(#txS)"/>
<path d="M1700 655C1745 700 1765 760 1760 810C1755 870 1730 920 1700 1000L1740 1000L1790 800L1760 660Z" fill="#8a8a8a" filter="url(#b2)"/>
<path d="M1400 700C1385 730 1374 765 1372 800C1372 815 1376 826 1384 832L1420 828L1418 790L1415 740Z" fill="#181818" filter="url(#b2)"/>
<path d="M1405.0 775.0C1405.0 764.5 1406.2 749.0 1410.0 737.0C1413.8 725.0 1420.5 712.5 1428.0 703.0C1435.5 693.5 1443.8 686.5 1455.0 680.0C1466.2 673.5 1480.8 667.8 1495.0 664.0C1509.2 660.2 1524.2 658.2 1540.0 657.0C1555.8 655.8 1573.3 655.7 1590.0 657.0C1606.7 658.3 1625.0 660.7 1640.0 665.0C1655.0 669.3 1668.3 675.2 1680.0 683.0C1691.7 690.8 1702.2 700.8 1710.0 712.0C1717.8 723.2 1723.3 736.2 1727.0 750.0C1730.7 763.8 1732.3 780.0 1732.0 795.0C1731.7 810.0 1729.5 825.8 1725.0 840.0C1720.5 854.2 1712.5 869.2 1705.0 880.0C1697.5 890.8 1689.2 898.0 1680.0 905.0C1670.8 912.0 1660.0 918.2 1650.0 922.0C1640.0 925.8 1629.7 929.0 1620.0 928.0C1610.3 927.0 1600.0 921.2 1592.0 916.0C1584.0 910.8 1579.8 901.7 1572.0 897.0C1564.2 892.3 1553.7 887.5 1545.0 888.0C1536.3 888.5 1528.3 898.3 1520.0 900.0C1511.7 901.7 1503.3 901.3 1495.0 898.0C1486.7 894.7 1476.2 887.2 1470.0 880.0C1463.8 872.8 1461.7 863.3 1458.0 855.0C1454.3 846.7 1453.5 836.7 1448.0 830.0C1442.5 823.3 1431.3 820.0 1425.0 815.0C1418.7 810.0 1413.3 806.7 1410.0 800.0C1406.7 793.3 1405.0 785.5 1405.0 775.0Z" fill="#141414" stroke="#141414" stroke-width="17" filter="url(#b1)"/>
<path d="M1400.5 774.5C1401.4 767.9 1401.7 747.5 1405.7 735.1C1409.6 722.7 1416.5 709.7 1424.2 699.9C1431.9 690.0 1440.4 682.8 1451.9 676.0C1463.4 669.3 1478.5 663.4 1493.0 659.5C1507.6 655.5 1523.0 653.4 1539.3 652.2C1555.6 651.0 1573.6 650.8 1590.7 652.2C1607.8 653.6 1626.7 656.0 1642.1 660.5C1657.5 665.0 1671.2 671.0 1683.2 679.1C1695.2 687.3 1706.0 697.6 1714.1 709.2C1722.1 720.8 1727.8 734.2 1731.5 748.6C1735.3 762.9 1737.0 779.6 1736.7 795.2C1736.3 810.7 1734.1 827.1 1729.5 841.8C1724.9 856.5 1712.3 876.3 1708.9 883.2" fill="none" stroke="#484848" stroke-width="1.5" filter="url(#b05)"/>
<path d="M1350 900C1356 880 1372 872 1385 880C1400 900 1405 950 1420 1000L1372 1000C1360 960 1348 930 1350 900Z" fill="#a2a2a2" filter="url(#b2)"/>
<circle cx="1396" cy="842" r="21" fill="#6e6e6e" filter="url(#b1)"/><circle cx="1396" cy="842" r="16" fill="#161616" filter="url(#b1)"/>
<path d="M1412 850C1430 858 1445 862 1460 866" stroke="#303030" stroke-width="6" fill="none" filter="url(#b2)"/>
<path d="M1392 890C1405 884 1425 888 1432 900C1430 925 1418 940 1406 948C1398 930 1390 910 1392 890Z" fill="#0e0e0e" filter="url(#b1)"/>
<path d="M1440 880C1455 920 1470 960 1480 1000M1470 905C1490 940 1500 970 1505 1000" stroke="#2a2a2a" stroke-width="4" fill="none" filter="url(#b2)"/>
<path d="M1445 872C1462 915 1474 955 1484 1000L1462 1000C1452 960 1440 920 1428 885Z" fill="#8c8c8c" filter="url(#b2)" opacity="0.8"/>
<path d="M1560 900C1565 930 1570 960 1580 1000L1610 1000C1600 965 1596 935 1594 912Z" fill="#707070" filter="url(#b2)"/>
<path d="M1545 905C1548 935 1552 965 1560 1000" stroke="#1c1c1c" stroke-width="5" fill="none" filter="url(#b2)"/>
<path d="M1610 935C1640 940 1680 925 1705 900" stroke="#222" stroke-width="6" fill="none" filter="url(#b2)"/>
</g>
<g clip-path="url(#brS)">
<rect x="1395" y="640" width="345" height="300" filter="url(#gyS)"/>
<g filter="url(#b8)" opacity="0.93"><ellipse cx="1575" cy="790" rx="95" ry="48" fill="#737373" transform="rotate(-8 1575 790)"/><ellipse cx="1520" cy="735" rx="55" ry="30" fill="#6e6e6e" transform="rotate(-20 1520 735)"/><ellipse cx="1660" cy="800" rx="35" ry="45" fill="#6e6e6e"/></g>
<path d="M1535 875C1540 850 1575 842 1600 856" fill="none" stroke="#565656" stroke-width="7" filter="url(#b2)"/>
<path d="M1548 878C1555 862 1578 858 1592 868" fill="none" stroke="#8a8a8a" stroke-width="5" filter="url(#b2)"/>
<path d="M1592.0 916.0C1588.7 908.0 1593.7 888.0 1600.0 880.0C1606.3 872.0 1618.3 869.3 1630.0 868.0C1641.7 866.7 1658.3 869.2 1670.0 872.0C1681.7 874.8 1698.3 879.3 1700.0 885.0C1701.7 890.7 1688.3 899.8 1680.0 906.0C1671.7 912.2 1660.0 918.3 1650.0 922.0C1640.0 925.7 1629.7 929.0 1620.0 928.0C1610.3 927.0 1595.3 924.0 1592.0 916.0Z" fill="#5c5c5c" filter="url(#b1)"/>
<g clip-path="url(#cbS)"><rect x="1590" y="860" width="120" height="75" filter="url(#txS2)" opacity="0.55" transform="rotate(-25 1640 900)"/></g>
<path d="M1560 880C1570 868 1592 870 1598 886C1600 905 1590 918 1578 915C1566 908 1556 895 1560 880Z" fill="#0c0c0c" filter="url(#b2)"/>
<ellipse cx="1640" cy="720" rx="50" ry="30" fill="#686868" filter="url(#b8)" opacity="0.7"/>
<rect x="1395" y="640" width="345" height="300" filter="url(#grS)" opacity="0.10"/>
</g>
<path d="M1405.0 775.0C1405.0 764.5 1406.2 749.0 1410.0 737.0C1413.8 725.0 1420.5 712.5 1428.0 703.0C1435.5 693.5 1443.8 686.5 1455.0 680.0C1466.2 673.5 1480.8 667.8 1495.0 664.0C1509.2 660.2 1524.2 658.2 1540.0 657.0C1555.8 655.8 1573.3 655.7 1590.0 657.0C1606.7 658.3 1625.0 660.7 1640.0 665.0C1655.0 669.3 1668.3 675.2 1680.0 683.0C1691.7 690.8 1702.2 700.8 1710.0 712.0C1717.8 723.2 1723.3 736.2 1727.0 750.0C1730.7 763.8 1732.3 780.0 1732.0 795.0C1731.7 810.0 1729.5 825.8 1725.0 840.0C1720.5 854.2 1712.5 869.2 1705.0 880.0C1697.5 890.8 1689.2 898.0 1680.0 905.0C1670.8 912.0 1660.0 918.2 1650.0 922.0C1640.0 925.8 1629.7 929.0 1620.0 928.0C1610.3 927.0 1600.0 921.2 1592.0 916.0C1584.0 910.8 1579.8 901.7 1572.0 897.0C1564.2 892.3 1553.7 887.5 1545.0 888.0C1536.3 888.5 1528.3 898.3 1520.0 900.0C1511.7 901.7 1503.3 901.3 1495.0 898.0C1486.7 894.7 1476.2 887.2 1470.0 880.0C1463.8 872.8 1461.7 863.3 1458.0 855.0C1454.3 846.7 1453.5 836.7 1448.0 830.0C1442.5 823.3 1431.3 820.0 1425.0 815.0C1418.7 810.0 1413.3 806.7 1410.0 800.0C1406.7 793.3 1405.0 785.5 1405.0 775.0Z" fill="none" stroke="#1a1a1a" stroke-width="2" filter="url(#b1)"/>
</g></g></svg>
<svg style="left:0;top:0" width="1920" height="1080" viewBox="0 0 1920 1080">
<defs><linearGradient id="gU" x1="0" y1="652" x2="0" y2="750" gradientUnits="userSpaceOnUse"><stop offset="0" stop-color="#e8902a"/><stop offset="0.25" stop-color="#d838a8"/><stop offset="0.6" stop-color="#ff2838"/><stop offset="1" stop-color="#ff3030"/></linearGradient><linearGradient id="gL" x1="0" y1="742" x2="0" y2="840" gradientUnits="userSpaceOnUse"><stop offset="0" stop-color="#e86a20"/><stop offset="0.45" stop-color="#d8b010"/><stop offset="0.8" stop-color="#b8c020"/><stop offset="1" stop-color="#50d830"/></linearGradient><linearGradient id="gAx" x1="0" y1="280" x2="0" y2="420" gradientUnits="userSpaceOnUse"><stop offset="0" stop-color="#70d020"/><stop offset="0.5" stop-color="#b8b818"/><stop offset="0.7" stop-color="#e87020"/><stop offset="1" stop-color="#ff2830"/></linearGradient><linearGradient id="gAr" x1="1555" y1="0" x2="1630" y2="0" gradientUnits="userSpaceOnUse"><stop offset="0" stop-color="#3048ff"/><stop offset="0.55" stop-color="#5040f0"/><stop offset="0.8" stop-color="#a040e0"/><stop offset="1" stop-color="#d838c0"/></linearGradient><filter id="fb"><feGaussianBlur stdDeviation="0.4"/></filter></defs>
<g filter="url(#fb)">
<path d="M1496 281l1.500 1.500" stroke="#70d020" stroke-width="2"/>
<path d="M1497 314C1496 330 1495 345 1494 368" stroke="url(#gAx)" stroke-width="2.200" fill="none" stroke-dasharray="7 2 3 2"/>
<path d="M1492 352C1491 360 1493 366 1491 372" stroke="#c8b018" stroke-width="2.500" fill="none"/>
<path d="M1501 356C1503 370 1502 386 1503 404M1499 372C1501 385 1500 398 1498 412M1504 378C1505 388 1505 396 1504 402" stroke="#ff2830" stroke-width="2.200" fill="none" stroke-dasharray="9 1.500 5 1.500"/>
<path d="M1491 380l1 10M1493 402l3 12M1496 415l1 8" stroke="#e86a30" stroke-width="1.800" fill="none"/>
<path d="M1497 404l2 9" stroke="#e050a0" stroke-width="2" fill="none"/>
<path d="M1555.500 351C1552 365 1553 385 1558 400C1561 410 1566 418 1570 424" stroke="#ff2838" stroke-width="3" fill="none"/>
<path d="M1557 362C1555 380 1560 400 1568 412C1576 424 1590 432 1602 431C1610 428 1618 424 1626 418" stroke="url(#gAr)" stroke-width="5.5" fill="none" stroke-linecap="round"/>
<path d="M1560 368C1562 385 1568 400 1576 410C1584 418 1592 421 1598 420" stroke="#2850ff" stroke-width="5.5" fill="none" opacity="0.9" stroke-dasharray="11 1.5 6 1"/>
<path d="M1566 366l3 8M1572 390l6 14M1580 396l5 12" stroke="#40b0d8" stroke-width="2.400" fill="none"/>
<path d="M1596 432C1600 436 1606 434 1612 428" stroke="#9040e0" stroke-width="5" fill="none"/>
<path d="M1562 417l3 6M1566 420l3 7" stroke="#30e040" stroke-width="1.800"/>
<path d="M1576 328C1586 320 1598 316 1611 314" stroke="#c838c0" stroke-width="3.500" fill="none"/>
<path d="M1588 313C1596 312 1604 313 1612 315M1590 317C1598 316 1606 318 1612 321" stroke="#ff3858" stroke-width="3" fill="none"/>
</g>
<path d="M1627 389L1628 396L1632 399L1637 397L1641 393L1643.5 396L1642 402L1636 405L1632 410L1637 415L1632 421L1631 428L1626 431L1621 433L1617 440L1616 449L1612 451.5L1607 445L1600 446L1596 451.5L1593 448L1595 440L1599 436L1607 433L1611 428L1619 425L1625 421L1626 413L1620 408L1625 404L1627 397Z" fill="#a84848" stroke="#fff" stroke-width="1.500" stroke-linejoin="round"/>
<g filter="url(#fb)">
<path d="M781 652C772 668 760 690 756 712C754 730 770 748 790 750C808 750 824 738 826 722C827 704 824 690 820 676C816 664 812 658 810 654" stroke="url(#gU)" stroke-width="3.400" fill="none"/>
<path d="M757 716C758 734 774 746 790 746C806 746 821 736 823 720" stroke="#ff3038" stroke-width="5" fill="none"/>
<path d="M810 655C813 668 818 680 822 694" stroke="#e88a28" stroke-width="2" fill="none"/>
<path d="M809 656C812 668 817 682 823 696" stroke="#3858f0" stroke-width="3" fill="none" stroke-linecap="round"/>
<path d="M823 694C828 708 838 722 846 734C851 744 850 760 846 776" stroke="#2848ff" stroke-width="6.500" fill="none" stroke-linecap="round"/>
<path d="M848 750C849 770 840 790 834 808C828 826 820 842 808 858" stroke="#2848ff" stroke-width="7.500" fill="none" stroke-linecap="round"/>
<path d="M824 690C828 702 830 712 834 722M843 790C846 800 842 812 838 820" stroke="#3060ff" stroke-width="6" fill="none"/>
<path d="M848 742C850 762 840 786 832 806C826 822 818 838 806 856" stroke="#30d8a0" stroke-width="1.600" fill="none"/>
<path d="M838 800C834 815 826 830 818 842M812 850L806 864" stroke="#d07030" stroke-width="1.500" fill="none"/>
<path d="M806 858L799 866" stroke="#a0c828" stroke-width="2.500" fill="none"/>
<path d="M803 866L797 872" stroke="#3050ff" stroke-width="2.500" fill="none"/>
<path d="M735 743C738 756 742 766 748 776C754 792 760 806 764 818C768 828 772 834 776 840" stroke="url(#gL)" stroke-width="3" fill="none"/>
<path d="M752 786C758 800 762 812 768 826" stroke="#c8b418" stroke-width="4" fill="none"/>
</g>
<path d="M919.500 715L923 712H931L934.500 715L931 718H923Z" fill="#a03838" stroke="#fff" stroke-width="1.300"/>
<g filter="url(#fb)">
<path d="M1576 667C1582 676 1586 690 1588 706M1582 668C1588 680 1591 694 1591 712M1588 672C1592 682 1594 694 1594 706" stroke="#6a40ff" stroke-width="3.500" fill="none" opacity="0.95"/>
<path d="M1584 690C1586 700 1586 708 1587 716" stroke="#c040e0" stroke-width="3" fill="none"/>
<path d="M1610 712C1612 722 1616 730 1622 738M1616 716C1618 724 1622 730 1628 734M1606 722C1610 730 1612 736 1616 742" stroke="#4848ff" stroke-width="4" fill="none"/>
<path d="M1620 728l4 8M1626 728l3 6" stroke="#e04088" stroke-width="2.500" fill="none"/>
<path d="M1596 678C1600 690 1602 698 1604 706" stroke="#2848ff" stroke-width="2.500" fill="none"/>
<path d="M1565 744C1580 740 1596 742 1611 748M1564 748C1580 746 1596 748 1608 753M1565 752C1578 752 1592 754 1604 757" stroke="#e08888" stroke-width="2.600" fill="none"/>
<path d="M1572 741C1586 739 1600 742 1612 747" stroke="#58c070" stroke-width="1.300" fill="none"/>
<path d="M1590 750C1600 750 1610 746 1618 738" stroke="#8048e0" stroke-width="2.500" fill="none"/>
<path d="M1465 711l5 10l6 2l-2 -12l-4 6z" fill="#ff3050"/><path d="M1469 714l6 10" stroke="#ff5080" stroke-width="3"/>
<path d="M1486 693C1485 697 1484 701 1483 705" stroke="#d038c8" stroke-width="2.200" fill="none"/>
</g>
<path d="M1600.6 677.0L1610.0 676.2L1640.0 681.1L1667.0 685.6L1668.5 688.2L1658.7 688.6L1628.7 685.2L1604.3 681.1Z" fill="#a84848" stroke="#fff" stroke-width="1.500" stroke-linejoin="round"/>
<path d="M1615.6 692.0L1640.0 694.2L1671.8 698.7L1674.8 706.2L1666.2 713.7L1651.2 721.2L1640.0 720.5L1636.2 725.0L1630.6 726.9L1628.0 722.0L1636.2 715.6L1619.3 710.7L1613.7 702.5Z" fill="#a84848" stroke="#fff" stroke-width="1.500" stroke-linejoin="round"/>
</svg>
<div class="ser" style="left:440px;top:161.7px;letter-spacing:0.11px">Series :1353</div>
<div class="ser" style="left:440px;top:174.7px;letter-spacing:0.08px">[DERIVED, SECONDARY, OTHER]</div>
<div class="ser" style="right:756.05px;top:161.7px;color:#e8873a;letter-spacing:0.55px">Research</div>
<div class="ser" style="right:755.86px;top:174.7px;color:#fff;letter-spacing:0.36px">Panchange^Hemant, 0010347163</div>
<div class="ser" style="right:755.77px;top:187.7px;color:#fff;letter-spacing:0.27px">Study ID :3632, Study Date :20220712</div>
<div class="ser" style="right:755.78px;top:200.7px;color:#fff;letter-spacing:0.28px">SIR H N RELIANCE FOUNDATION HOSP, 3.0T</div>
<div class="ser" style="right:755.5px;top:213.7px;color:#fff">DOB :19820307</div>
<div class="ser" style="right:755.89px;top:226.7px;color:#fff;letter-spacing:0.39px">[FA] fa</div>
<div class="ser" style="left:440px;top:321.8px">COL</div>
<div class="ser" style="left:440px;top:334.7px;letter-spacing:0.38px">FA :90</div>
<div class="ser" style="left:440px;top:347.6px">TI : ms</div>
<div class="ser" style="left:440px;top:360.5px">TR :8000.0 ms</div>
<div class="ser" style="left:440px;top:373.4px">TE :54.7 ms</div>
<div class="ser" style="left:440px;top:386.3px">NAQ :1</div>
<div class="ser" style="left:440px;top:399.2px;letter-spacing:0.14px">Matrix Acq. :[128x128]</div>
<div class="ser" style="left:440px;top:412.1px;letter-spacing:0.1px">Matrix Recon. :[256x256]</div>
<div class="ser" style="left:440px;top:425.0px;letter-spacing:-0.1px">FOV :[260x260] mm</div>
<div class="ser" style="left:440px;top:437.9px;letter-spacing:0.31px">Thickness/Gap :3.0/0.0 mm</div>
<div class="ser" style="left:440px;top:450.8px;letter-spacing:0.12px">Res. Recon. :[1.02x1.02] mm</div>
<svg style="left:460px;top:485px" width="70" height="65" viewBox="460 485 70 65">
<path d="M494 515L513 498" stroke="#00d000" stroke-width="1.4"/>
<path d="M469.5 524L481 511.5L499 518L500.5 531L489 542.5L472 538Z" fill="#b45a10"/>
<path d="M469.5 524L481 511.5L499 518L487 529.5Z" fill="#c46a16"/>
<path d="M487 529.5L499 518L500.5 531L489 542.5Z" fill="#a85210"/>
<path d="M469.5 524L487 529.5L489 542.5L472 538Z" fill="#b86014"/>
<path d="M481 518L472 503" stroke="#1414ff" stroke-width="1.4"/>
<path d="M491 529L512 539.5" stroke="#ff1010" stroke-width="1.4"/>
<text x="477" y="525" font-family="Liberation Serif" font-size="9" fill="#e8c020" transform="rotate(20 480 522)">S</text>
<text x="489" y="538" font-family="Liberation Serif" font-size="10" fill="#e8c020" transform="rotate(15 492 535)">L</text>
<text x="469" y="500" font-family="Liberation Serif" font-size="11" fill="#fff">z</text>
<text x="510" y="495" font-family="Liberation Serif" font-size="11" fill="#fff">y</text>
<text x="510" y="537" font-family="Liberation Serif" font-size="11" fill="#fff">x</text>
</svg>
<div class="vt" style="right:36.26px;top:159.5px;color:#e8873a;letter-spacing:0.24px">Research use only</div>
<div class="vt" style="right:36.263px;top:177.5px;color:#f2f2f2;letter-spacing:0.237px">Panchange^Hemant, 0010347163</div>
<div class="vt" style="right:36.395px;top:195.5px;color:#f2f2f2;letter-spacing:0.105px">Study Date :20220712</div>
<div class="vt" style="right:36.8px;top:213.5px;color:#f2f2f2;letter-spacing:-0.3px">[FA] fa</div>
<div class="vt" style="right:36.6px;top:231.5px;color:#f2f2f2;letter-spacing:-0.1px">3D Ax T1 MP-RAG (Underlay)</div>
<div class="vt" style="right:768.26px;top:582.5px;color:#e8873a;letter-spacing:0.24px">Research use only</div>
<div class="vt" style="right:768.263px;top:600.5px;color:#f2f2f2;letter-spacing:0.237px">Panchange^Hemant, 0010347163</div>
<div class="vt" style="right:768.395px;top:618.5px;color:#f2f2f2;letter-spacing:0.105px">Study Date :20220712</div>
<div class="vt" style="right:768.8px;top:636.5px;color:#f2f2f2;letter-spacing:-0.3px">[FA] fa</div>
<div class="vt" style="right:768.6px;top:654.5px;color:#f2f2f2;letter-spacing:-0.1px">3D Ax T1 MP-RAG (Underlay)</div>
<div class="vt" style="right:36.26px;top:582.5px;color:#e8873a;letter-spacing:0.24px">Research use only</div>
<div class="vt" style="right:36.263px;top:600.5px;color:#f2f2f2;letter-spacing:0.237px">Panchange^Hemant, 0010347163</div>
<div class="vt" style="right:36.395px;top:618.5px;color:#f2f2f2;letter-spacing:0.105px">Study Date :20220712</div>
<div class="vt" style="right:36.8px;top:636.5px;color:#f2f2f2;letter-spacing:-0.3px">[FA] fa</div>
<div class="vt" style="right:36.6px;top:654.5px;color:#f2f2f2;letter-spacing:-0.1px">3D Ax T1 MP-RAG (Underlay)</div>
<svg style="left:0;top:0" width="1920" height="1080"><path d="M1449.5 560.0V570.5H1628V560.0M1467.3 565.0V570.5M1485.2 565.0V570.5M1503.0 565.0V570.5M1520.9 565.0V570.5M1538.8 565.0V570.5M1556.6 565.0V570.5M1574.5 565.0V570.5M1592.3 565.0V570.5M1610.2 565.0V570.5" fill="none" stroke="#e8873a" stroke-width="1.2"/></svg>
<div class="t or" style="left:1440.5px;top:560.0px;font-size:12px">0</div>
<div class="t or" style="left:1630px;top:560.0px;font-size:12px;letter-spacing:0px">10 cm</div>
<svg style="left:0;top:0" width="1920" height="1080"><path d="M1888.0 275.5H1898.5V454.5H1888.0M1893.0 293.4H1898.5M1893.0 311.3H1898.5M1893.0 329.2H1898.5M1893.0 347.1H1898.5M1893.0 365.0H1898.5M1893.0 382.9H1898.5M1893.0 400.8H1898.5M1893.0 418.7H1898.5M1893.0 436.6H1898.5" fill="none" stroke="#e8873a" stroke-width="1.2"/></svg>
<div class="t or" style="right:20.5px;top:252.5px;font-size:12px;text-align:right;line-height:10.5px;letter-spacing:0.4px">10<br>cm</div>
<div class="t or" style="right:22.5px;top:458.0px;font-size:12px">0</div>
<div class="a" style="left:685px;top:978px;width:238px;height:11px;background:rgba(0,0,0,0.78)"></div>
<div class="a" style="left:1420px;top:978px;width:237px;height:11px;background:rgba(0,0,0,0.78)"></div>
<svg style="left:0;top:0" width="1920" height="1080"><path d="M685.3 977.8V988.3H923V977.8M709.1 982.8V988.3M732.8 982.8V988.3M756.6 982.8V988.3M780.4 982.8V988.3M804.1 982.8V988.3M827.9 982.8V988.3M851.7 982.8V988.3M875.5 982.8V988.3M899.2 982.8V988.3" fill="none" stroke="#e8873a" stroke-width="1.2"/></svg>
<div class="t or" style="left:676.5px;top:977.8px;font-size:12px">0</div>
<div class="t or" style="left:925px;top:977.8px;font-size:12px;letter-spacing:0px">10 cm</div>
<svg style="left:0;top:0" width="1920" height="1080"><path d="M1156.5 667H1167V903.5H1156.5M1161.5 690.6H1167M1161.5 714.3H1167M1161.5 738.0H1167M1161.5 761.6H1167M1161.5 785.2H1167M1161.5 808.9H1167M1161.5 832.5H1167M1161.5 856.2H1167M1161.5 879.9H1167" fill="none" stroke="#e8873a" stroke-width="1.2"/></svg>
<div class="t or" style="right:752px;top:644px;font-size:12px;text-align:right;line-height:10.5px;letter-spacing:0.4px">10<br>cm</div>
<div class="t or" style="right:754px;top:907.0px;font-size:12px">0</div>
<svg style="left:0;top:0" width="1920" height="1080"><path d="M1420.3 977.8V988.3H1656.7V977.8M1443.9 982.8V988.3M1467.6 982.8V988.3M1491.2 982.8V988.3M1514.9 982.8V988.3M1538.5 982.8V988.3M1562.1 982.8V988.3M1585.8 982.8V988.3M1609.4 982.8V988.3M1633.1 982.8V988.3" fill="none" stroke="#e8873a" stroke-width="1.2"/></svg>
<div class="t or" style="left:1411.5px;top:977.8px;font-size:12px">0</div>
<div class="t or" style="left:1658.7px;top:977.8px;font-size:12px;letter-spacing:0px">10 cm</div>
<svg style="left:0;top:0" width="1920" height="1080"><path d="M1888.0 667H1898.5V903.5H1888.0M1893.0 690.6H1898.5M1893.0 714.3H1898.5M1893.0 738.0H1898.5M1893.0 761.6H1898.5M1893.0 785.2H1898.5M1893.0 808.9H1898.5M1893.0 832.5H1898.5M1893.0 856.2H1898.5M1893.0 879.9H1898.5" fill="none" stroke="#e8873a" stroke-width="1.2"/></svg>
<div class="t or" style="right:20.5px;top:644px;font-size:12px;text-align:right;line-height:10.5px;letter-spacing:0.4px">10<br>cm</div>
<div class="t or" style="right:22.5px;top:907.0px;font-size:12px">0</div>
<svg style="left:0;top:0" width="1920" height="1080" fill="none"><path d="M1595.2 153V245.5M1595.2 484.5V576" stroke="#3f8fdc" stroke-width="1.2"/><circle cx="1595.2" cy="185" r="3.8" stroke="#3f8fdc" stroke-width="1.1"/><path d="M1589.2 539L1595.2 543L1589.2 547ZM1601.2 539L1595.2 543L1601.2 547Z" fill="#3f8fdc"/><path d="M1173 376H1264.5M1870.5 376H1902" stroke="#35a565" stroke-width="1.2"/><circle cx="1874.5" cy="376" r="3.8" stroke="#35a565" stroke-width="1.1"/><path d="M1199.8 370.5H1207.8L1203.8 376ZM1199.8 381.5H1207.8L1203.8 376Z" fill="#35a565"/></svg>
<svg style="left:0;top:0" width="1920" height="1080" fill="none"><path d="M878.6 578V668M878.6 901V992" stroke="#3f8fdc" stroke-width="1.2"/><circle cx="878.6" cy="608" r="3.8" stroke="#3f8fdc" stroke-width="1.1"/><path d="M872.6 958L878.6 962L872.6 966ZM884.6 958L878.6 962L884.6 966Z" fill="#3f8fdc"/><path d="M437 720.4H527.5M1080 720.4H1171" stroke="#c2405a" stroke-width="1.2"/><circle cx="1140.5" cy="720.4" r="3.8" stroke="#c2405a" stroke-width="1.1"/><path d="M463 714.9H471L467 720.4ZM463 725.9H471L467 720.4Z" fill="#c2405a"/></svg>
<svg style="left:0;top:0" width="1920" height="1080" fill="none"><path d="M1554.2 578V668M1554.2 901V992" stroke="#35a565" stroke-width="1.2"/><circle cx="1554.2" cy="608" r="3.8" stroke="#35a565" stroke-width="1.1"/><path d="M1548.2 958L1554.2 962L1548.2 966ZM1560.2 958L1554.2 962L1560.2 966Z" fill="#35a565"/><path d="M1173 720.4H1264.5M1812 720.4H1902" stroke="#c2405a" stroke-width="1.2"/><circle cx="1872" cy="720.4" r="3.8" stroke="#c2405a" stroke-width="1.1"/><path d="M1199.8 714.9H1207.8L1203.8 720.4ZM1199.8 725.9H1207.8L1203.8 720.4Z" fill="#c2405a"/></svg>
<div class="t" style="left:1879px;top:359.5px;font-size:13px;font-weight:bold;color:#10e010">L</div>
<div class="t" style="left:1533.5px;top:548px;font-size:13px;font-weight:bold;color:#10e010;background:#0a0a0a;padding:1px 2px 0 2px;margin:-1px 0 0 -2px">P</div>
<div class="t" style="left:1146.5px;top:780.5px;font-size:13px;font-weight:bold;color:#10e010">L</div>
<div class="t" style="left:801px;top:965px;font-size:13px;font-weight:bold;color:#10e010;background:#0a0a0a;padding:1px 2px 0 2px;margin:-1px 0 0 -2px">I</div>
<div class="t" style="left:1878.5px;top:780.5px;font-size:13px;font-weight:bold;color:#10e010">P</div>
<div class="t" style="left:1536px;top:965px;font-size:13px;font-weight:bold;color:#10e010;background:#0a0a0a;padding:1px 2px 0 2px;margin:-1px 0 0 -2px">I</div>
<svg style="left:1189.5px;top:540px" width="22" height="22" viewBox="0 0 22 22" fill="none" stroke="#d0d0d0" stroke-width="1.2"><path d="M0.6 11V0.6H21.4V21.4H11.5"/><rect x="0.6" y="13.6" width="7.8" height="7.8"/><path d="M10.5 11.5L17.8 4.2M12.6 4H18V9.4"/></svg>
<svg style="left:452.5px;top:958px" width="22" height="22" viewBox="0 0 22 22" fill="none" stroke="#d0d0d0" stroke-width="1.2"><path d="M0.6 11V0.6H21.4V21.4H11.5"/><rect x="0.6" y="13.6" width="7.8" height="7.8"/><path d="M10.5 11.5L17.8 4.2M12.6 4H18V9.4"/></svg>
<svg style="left:1189.5px;top:958px" width="22" height="22" viewBox="0 0 22 22" fill="none" stroke="#d0d0d0" stroke-width="1.2"><path d="M0.6 11V0.6H21.4V21.4H11.5"/><rect x="0.6" y="13.6" width="7.8" height="7.8"/><path d="M10.5 11.5L17.8 4.2M12.6 4H18V9.4"/></svg>
<div class="a" style="left:1602px;top:650px;width:244.5px;height:21px;border:1.6px solid #e23a3a;border-radius:3px;background:rgba(30,30,30,0.86)"></div>
<div class="t" style="left:1609px;top:656px;font-size:12px;font-weight:bold;color:#fff;letter-spacing:-0.15px;text-shadow:0 0 2px #000">Activation Motor Right hand T3.8 (11.35cc)</div>
<div class="a" style="left:919.5px;top:688px;width:245.5px;height:20.5px;border:1.6px solid #e23a3a;border-radius:3px;background:rgba(30,30,30,1)"></div>
<div class="t" style="left:926.5px;top:694px;font-size:12px;font-weight:bold;color:#fff;letter-spacing:-0.15px;text-shadow:0 0 2px #000">Activation Motor Right hand T3.8 (11.35cc)</div>
<div class="a" style="left:1626.5px;top:363.5px;width:244.0px;height:21.5px;border:1.6px solid #e23a3a;border-radius:3px;background:rgba(30,30,30,1)"></div>
<div class="t" style="left:1633.5px;top:369.5px;font-size:12px;font-weight:bold;color:#fff;letter-spacing:-0.15px;text-shadow:0 0 2px #000">Activation Motor Right hand T3.8 (11.35cc)</div>
<div class="t" style="right:83px;top:916.5px;font-size:11px;color:#f0f0f0">WL :</div><div class="t or" style="left:1838.5px;top:916px;font-size:11px">0.5</div>
<div class="t" style="right:83px;top:932px;font-size:11px;color:#f0f0f0">WW :</div><div class="t or" style="left:1838.5px;top:931.5px;font-size:11px">1.0</div>
<div class="t" style="right:83px;top:952px;font-size:11px;color:#f0f0f0">Thick. :</div><div class="t or" style="left:1838.5px;top:951.5px;font-size:11px">0.0</div>
<div class="a" style="left:1800px;top:969px;width:27px;height:15px;background:#e8873a;font-size:10.5px;line-height:15px;text-align:center;color:#f3d2b4">Thin</div>
<div class="a" style="left:1843.5px;top:969px;width:32.5px;height:15px;border:1px solid #e8e8e8;font-size:10.5px;line-height:13px;text-align:center;color:#f0f0f0;background:#000">Thick</div>
<!-- frame lines -->
<div class="a" style="left:435px;top:152px;width:1469px;height:1px;background:#70707a"></div>
<div class="a" style="left:1171px;top:152px;width:2px;height:841px;background:#73737e"></div>
<div class="a" style="left:435px;top:576px;width:1469px;height:2px;background:#7a7a86"></div>
<div class="a" style="left:435px;top:578px;width:2px;height:415px;background:#8a8a96"></div>
<div class="a" style="left:1902px;top:152px;width:2px;height:841px;background:#5a5a62"></div>
<div class="a" style="left:435px;top:992px;width:1469px;height:1px;background:#5a5a62"></div>
<!-- right edge strip -->
<div class="a" style="left:1915px;top:102px;width:5px;height:903px;background:#bbbbbb;border-radius:5px 0 0 0"></div>
<div class="a" style="left:1910px;top:499px;width:10px;height:98px;background:#bbbbbb;border-radius:5px 0 0 5px"></div>
<svg style="left:1911px;top:541px" width="8" height="14" fill="#ee8a26"><rect x="6.9" y="6" width="1.3" height="1.3"/><rect x="4.6" y="3.7" width="1.3" height="1.3"/><rect x="4.6" y="6" width="1.3" height="1.3"/><rect x="4.6" y="8.3" width="1.3" height="1.3"/><rect x="2.3" y="3.7" width="1.3" height="1.3"/><rect x="2.3" y="6" width="1.3" height="1.3"/><rect x="2.3" y="8.3" width="1.3" height="1.3"/><rect x="0" y="0.5" width="1.3" height="1.3"/><rect x="0" y="3.7" width="1.3" height="1.3"/><rect x="0" y="6" width="1.3" height="1.3"/><rect x="0" y="8.3" width="1.3" height="1.3"/><rect x="0" y="11.5" width="1.3" height="1.3"/></svg>
<!-- bottom bars -->
<div class="a" style="left:0;top:1005px;width:1920px;height:5px;background:#bdbdbd;border-radius:6px 0 0 0"></div>
<div class="a" style="left:912px;top:1000px;width:98px;height:10px;background:#bdbdbd;border-radius:6px 6px 0 0"></div>
<div class="a" style="left:0;top:1010px;width:1920px;height:2px;background:#3a3a3e"></div>
<div class="a" style="left:0;top:1012px;width:1920px;height:16px;background:#000"></div>
<div class="a" style="left:0;top:1028px;width:1920px;height:2px;background:#6a6a70"></div>
<!-- bottom dotted arrow -->
<svg style="left:953px;top:1001px" width="15" height="9" fill="#1a1a1a"><rect x="6.6" y="0.4" width="1.5" height="1.5"/><rect x="3.6" y="3.3" width="1.5" height="1.5"/><rect x="6.6" y="3.3" width="1.5" height="1.5"/><rect x="9.6" y="3.3" width="1.5" height="1.5"/><rect x="0.6" y="6.2" width="1.5" height="1.5"/><rect x="3.6" y="6.2" width="1.5" height="1.5"/><rect x="6.6" y="6.2" width="1.5" height="1.5"/><rect x="9.6" y="6.2" width="1.5" height="1.5"/><rect x="12.6" y="6.2" width="1.5" height="1.5"/></svg>
<!-- taskbar -->
<div class="a" style="left:0;top:1030px;width:1920px;height:50px;background:linear-gradient(90deg,#22323a 0,#23333b 45%,#253238 62%,#2b3133 70%,#3a3229 74.5%,#2e312f 79%,#24323a 86%,#22323b 100%)"></div>
<div class="a" style="left:866px;top:1030px;width:61px;height:50px;background:#4b595e"></div>
<div class="a" style="left:189px;top:1077px;width:51px;height:3px;background:#f8deb0"></div>
<div class="a" style="left:685px;top:1077px;width:51px;height:3px;background:#f8deb0"></div>
<div class="a" style="left:809px;top:1077px;width:51px;height:3px;background:#f8deb0"></div>
<div class="a" style="left:866px;top:1077px;width:61px;height:3px;background:#f8deb0"></div>
<svg style="left:0;top:1030px" width="960" height="50" viewBox="0 1030 960 50">
<!-- windows -->
<path d="M20 1047.6L28.6 1046.4V1054.4H20ZM29.8 1046.2L40 1044.8V1054.4H29.8ZM20 1055.6H28.6V1063.6L20 1062.4ZM29.8 1055.6H40V1065.2L29.8 1063.8Z" fill="#fff"/>
<!-- search -->
<circle cx="92.5" cy="1050.5" r="9.6" fill="none" stroke="#fff" stroke-width="2.8"/><path d="M85.8 1057.8L77.5 1067" stroke="#fff" stroke-width="3.2" stroke-linecap="round"/>
<!-- task view -->
<g fill="none" stroke="#fff" stroke-width="1.5"><rect x="141" y="1050.5" width="11" height="8.5"/><path d="M140 1049V1046.5H153V1049M140 1060.5V1063H153V1060.5M158 1045.5V1064"/></g><rect x="156.4" y="1051" width="3.2" height="3.8" fill="#fff"/>
<!-- mail -->
<path d="M199 1051L214 1041L229 1051V1068H199Z" fill="#1071c8"/><path d="M203 1049.5H225V1058L214 1063L203 1058Z" fill="#fff"/><path d="M199 1052L214 1061L229 1052V1068H199Z" fill="#28a8ea"/><path d="M199 1068L214 1060L229 1068Z" fill="#1a8fe0" opacity=".7"/>
<!-- explorer -->
<path d="M262 1045.5C262 1044.7 262.6 1044 263.5 1044H272L275 1046.5H288.5C289.3 1046.500 290 1047.2 290 1048V1050H262Z" fill="#e8a417"/><rect x="262" y="1048" width="28" height="18" rx="1.2" fill="#fcd15b"/><path d="M267 1066V1058.5C267 1057.700 267.600 1057 268.500 1057H283.5C284.300 1057 285 1057.700 285 1058.500V1066H281.500V1061H270.5V1066Z" fill="#3a8bd8"/>
<!-- colorful brain -->
<rect x="323" y="1040" width="30" height="30" fill="#fff"/><path d="M327 1054C326 1048 332 1044.500 338 1045C344 1044 350.500 1048 350 1054C350 1058 347 1060.500 344 1060.500L343 1064H339L338.500 1061C333 1062 327.500 1059 327 1054Z" fill="#c04fb0"/><circle cx="331.5" cy="1052" r="3.4" fill="#3d6fd0"/><circle cx="337.500" cy="1049" r="3" fill="#e23a6a"/><circle cx="343.500" cy="1050" r="3.200" fill="#34b06a"/><circle cx="346.500" cy="1055" r="2.800" fill="#e8a020"/><circle cx="339" cy="1055.500" r="3" fill="#20b0c0"/><circle cx="333" cy="1057.500" r="2.600" fill="#7a4fd0"/>
<!-- circle app -->
<circle cx="399" cy="1054" r="14" fill="#c8c8d0"/><circle cx="399" cy="1054" r="11.400" fill="#16186e"/><circle cx="399" cy="1054" r="11.4" fill="none" stroke="#b03070" stroke-width="0.8"/><path d="M392 1058C393 1052 396 1049 400 1048L403 1051L405 1050L406 1057L402 1060L400 1057L396 1061Z" fill="#e8e8f4"/>
<!-- M app -->
<path d="M451 1048L462 1043L470 1045L466 1064L455 1063Z" fill="#88c8c0"/><path d="M454 1046L466 1043L473 1046L468 1065L456 1062Z" fill="#e8b040"/><path d="M457 1045L470 1044L476 1048L470 1066L458 1062Z" fill="#e07820"/><path d="M460 1046L474 1043.500L478.500 1048L476.500 1061L466 1067L458.500 1060Z" fill="#1f5fc0"/><text x="461.5" y="1061" font-family="Liberation Serif" font-weight="bold" font-size="15" fill="#fff">M</text>
<!-- gray brain -->
<path d="M509 1057C507 1051 512 1046 518 1045C524 1043 532 1044 536 1048C540 1051 541 1056 538 1059C536 1061 533 1060 531 1062C528 1064 523 1062 520 1061C516 1061 510 1061 509 1057Z" fill="#a9a9a9"/><path d="M512 1055C514 1051 517 1053 519 1049M521 1058C523 1054 526 1056 528 1051M530 1058C531 1055 534 1056 535 1052M516 1049C519 1047 522 1049 525 1047M527 1047C530 1046 532 1049 535 1049" stroke="#e8e8e8" stroke-width="1.1" fill="none"/>
<!-- m365 -->
<path d="M586 1040.500C588 1039.500 590 1039.500 592 1040.500L597 1043.500C599 1044.600 600 1046.500 600 1048.500V1058L593 1062V1050.500C593 1049 592.300 1048 591 1047.300L586 1044.500L579 1048.500C577.500 1049.300 577 1050.500 577 1052L573 1051V1048.500C573 1046.500 574 1044.600 576 1043.500Z" fill="#4a8fe8"/><path d="M573 1049V1060C573 1062 574 1063.600 576 1064.700L583 1068.600C585 1069.700 587.500 1069.700 589.500 1068.600L598 1063.700C599.300 1063 600 1061.700 600 1060.300V1056L590 1061.800C588 1063 586 1063 584 1061.800L580 1059.500C579 1058.900 578.400 1058 578.400 1056.800V1049.500L576.500 1048.400C575 1047.600 573 1047.800 573 1049Z" fill="#b070e8"/><path d="M573 1049V1058L580 1054V1049.500C580 1048 578.500 1047 577 1047.800Z" fill="#7a5fe0"/>
<!-- edge -->
<circle cx="648" cy="1054.500" r="14.600" fill="#1c8fd8"/><path d="M633.500 1053C634.500 1045 641 1040 648.500 1040C657 1040 662.600 1046.500 662.600 1052.500C662.600 1057 659 1059.500 655.500 1059.500C652.500 1059.500 651 1058 651.500 1056.500C652 1055 653 1054.500 653 1052.500C653 1049.500 650 1047 646.500 1047C640 1047 634 1052 633.500 1053Z" fill="#3fd07a"/><path d="M638 1062C638 1056 642 1051.500 647 1051C645 1053 645 1056 646.500 1059C648.500 1062.500 653 1064.500 658.500 1063C656 1067 652 1069.200 648 1069.200C643 1069.200 638 1066.500 638 1062Z" fill="#125aa8"/>
<!-- chrome -->
<circle cx="710" cy="1054.500" r="14.800" fill="#e8433a"/><path d="M710 1054.500L697.200 1047.100A14.800 14.800 0 0 0 710 1069.300L716.500 1058Z" fill="#2fa052"/><path d="M710 1054.500L716.500 1058L710 1069.300A14.800 14.800 0 0 0 722.800 1047.100H710Z" fill="#fbc116"/><circle cx="710" cy="1054.500" r="6.800" fill="#fff"/><circle cx="710" cy="1054.500" r="5.400" fill="#3c7be8"/>
<!-- olea gray -->
<rect x="757" y="1040" width="30" height="30" rx="3" fill="#6c6c6c"/><path d="M771 1043.500L760.500 1048.300V1061.700L771 1066.500V1063A9 9 0 0 1 771 1047Z" fill="#b4b4b4"/><path d="M773 1043.500L783.500 1048.300V1061.700L773 1066.500V1063A9 9 0 0 0 773 1047Z" fill="#e8e8e8"/>
<!-- word -->
<rect x="826" y="1041" width="22" height="27" rx="1.500" fill="#2a7ae0"/><rect x="826" y="1041" width="22" height="9" fill="#3a96f0"/><rect x="826" y="1059" width="22" height="9" fill="#1448a8"/><rect x="826" y="1050" width="22" height="9" fill="#1f60c8"/><rect x="819" y="1047" width="16" height="16" rx="1.500" fill="#1650b8"/><text x="821.200" y="1059.500" font-family="Liberation Sans" font-weight="bold" font-size="11.500" fill="#fff">W</text>
<!-- olea active -->
<rect x="881" y="1040" width="30" height="30" rx="3" fill="#5e6668"/><path d="M895 1043.500L884.500 1048.300V1061.700L895 1066.500V1063A9 9 0 0 1 895 1047Z" fill="#b4b4b4"/><path d="M897 1043.500L907.500 1048.300V1061.700L897 1066.500V1063A9 9 0 0 0 897 1047Z" fill="#e8e8e8"/>
</svg>
<!-- tray -->
<div class="t" style="left:1690px;top:1046px;font-size:14.5px;color:#fff">EN</div>
<svg style="left:1738px;top:1047px" width="18" height="12" fill="none" stroke="#fff" stroke-width="1.4"><path d="M1.500 10L9 2.500L16.500 10"/></svg>
<div class="t" style="left:1790.5px;top:1036.500px;font-size:14.500px;color:#fff;letter-spacing:-0.300px">10:25</div>
<div class="t" style="left:1770px;top:1059.500px;font-size:14.500px;color:#fff;letter-spacing:0.1px">23-05-2023</div>
<svg style="left:1867px;top:1044px" width="32" height="30" viewBox="0 0 32 30"><path d="M1 1.500H21.500V16.500H9L4 21V16.500H1Z" fill="#fff"/><path d="M4.500 5.500H18M4.500 9H18M4.500 12.500H12" stroke="#22323a" stroke-width="1.300"/><circle cx="21.500" cy="19.500" r="8.500" fill="#22323a" stroke="#fff" stroke-width="1.300"/><text x="18.400" y="24.600" font-family="Liberation Sans" font-size="13.500" font-weight="bold" fill="#fff">1</text></svg>
<div class="a" style="left:1910px;top:1030px;width:1px;height:50px;background:#5a666c"></div>
</body></html>
